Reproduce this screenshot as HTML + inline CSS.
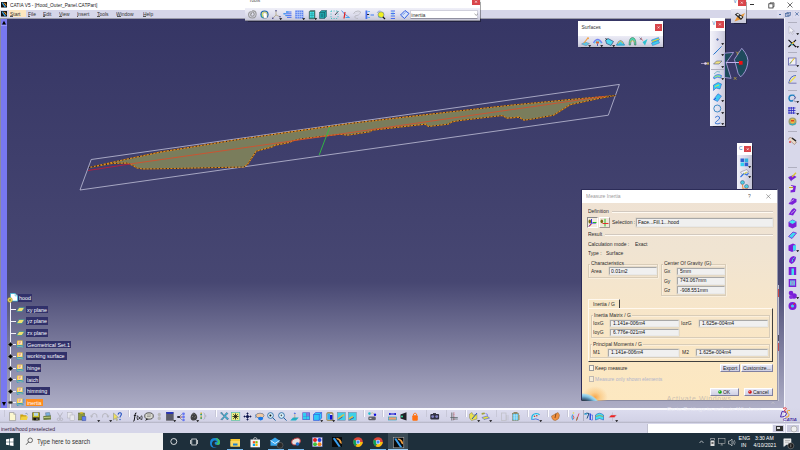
<!DOCTYPE html>
<html><head><meta charset="utf-8">
<style>
*{margin:0;padding:0;box-sizing:border-box}
html,body{width:800px;height:450px;overflow:hidden;background:#fff;font-family:"Liberation Sans",sans-serif;color:#222}
.a{position:absolute}
#title{left:0;top:0;width:800px;height:9.5px;background:#fff}
#menu{left:0;top:9.5px;width:800px;height:8.5px;background:#d6d6e9}
#sep{left:0;top:18px;width:800px;height:1px;background:#9a9aa8}
#vp{left:0;top:18.5px;width:784px;height:389px;background:linear-gradient(to bottom,#363665 0px,#474772 263px,#aeaec6 389px)}
#lstrip{left:0;top:18.6px;width:7px;height:389px;background:#7878f0;border-left:1px solid #8a8aa0}
#rstrip{left:784px;top:18px;width:16px;height:390px;background:#d8d8ea;border-left:1px solid #f4f4fb}
#btb{left:0;top:407.5px;width:800px;height:15.5px;background:linear-gradient(#fbfbff 0,#fbfbff 1.5px,#dcdcee 2px,#d2d2e6 13px,#a9a9b8 15.5px)}
#status{left:0;top:423px;width:800px;height:10px;background:#d6d6e9}
#task{left:0;top:433px;width:800px;height:17px;background:#1e2f3b}
.t{position:absolute;white-space:nowrap;line-height:1}
svg{position:absolute;left:0;top:0}
</style></head><body>
<div class="a" id="title"></div>
<div class="a" id="menu"></div>
<div class="a" id="sep"></div>
<div class="a" id="vp"></div>
<div class="a" id="lstrip"></div>
<div class="a" id="rstrip"></div>
<div class="a" id="btb"></div>
<div class="a" id="status"></div>
<div class="a" id="task"></div>

<!-- VIEWPORT GRAPHICS -->
<svg width="800" height="450" viewBox="0 0 800 450">
  <!-- plane -->
  <polygon points="80,190 91.2,159.5 619.4,84.4 608.3,115.2" fill="none" stroke="#c0c0d8" stroke-width="0.8"/>
  <!-- hood -->
  <path d="M89,167.5 L125,159.5 L160,152.1 L240,139.3 L300,130.6 L350,123.5 L400,117.6 L460,110.7 L510,105.2 L570,99.5 L615.5,95.5
   L600,98.3 L585,101.5 L570,104.7 L553.5,115.2 L534,118.7 L524,120.2 L519,117.2 L507,118.2 L502.5,115.5 L460,120.5 L451.7,122 L448,124.2 L428.5,126.5 L425.5,124.2 L372,130.2 L370,131.7 L347.5,135.2 L340,134.3 L300,139 L293,140.75 L289.5,142.5 L275.5,145.1 L272,146.9 L256.25,151.25 L247.5,164.4 L244,167 L160,168.75 L143,169 L137,168 L133,165.5 L127,163 L112,163.5 Z"
   fill="#7a7d5c" stroke="#e08a1a" stroke-width="1.15"/>
  <path d="M89,167.5 L125,159.5 L160,152.1 L240,139.3 L300,130.6 L350,123.5 L400,117.6 L460,110.7 L510,105.2 L570,99.5 L615.5,95.5
   L600,98.3 L585,101.5 L570,104.7 L553.5,115.2 L534,118.7 L524,120.2 L519,117.2 L507,118.2 L502.5,115.5 L460,120.5 L451.7,122 L448,124.2 L428.5,126.5 L425.5,124.2 L372,130.2 L370,131.7 L347.5,135.2 L340,134.3 L300,139 L293,140.75 L289.5,142.5 L275.5,145.1 L272,146.9 L256.25,151.25 L247.5,164.4 L244,167 L160,168.75 L143,169 L137,168 L133,165.5 L127,163 L112,163.5 Z"
   fill="none" stroke="#18141a" stroke-width="0.9" stroke-dasharray="1.2 2.2"/>
  <line x1="88" y1="170.5" x2="130" y2="164" stroke="#b01e40" stroke-width="1"/>
  <line x1="130" y1="164" x2="605" y2="96.3" stroke="#d2502e" stroke-width="0.9"/>
  <line x1="329.7" y1="127.2" x2="319.2" y2="155" stroke="#30c040" stroke-width="0.9"/>
</svg>

<!-- TREE START -->
<div class="a" style="left:10px;top:302px;width:0.9px;height:105.5px;background:#f0f0f8"></div>
<svg width="9" height="9" style="left:9.5px;top:293px" viewBox="0 0 9 9"><path d="M0.5,0.5 H5 L7.5,3 V8 H0.5Z" fill="#fff" stroke="#20c0e0" stroke-width="0.6"/><path d="M5,0.5 V3 H7.5" fill="#e0e0e0" stroke="#20c0e0" stroke-width="0.4"/></svg>
<svg width="6" height="6" style="left:7px;top:296.5px" viewBox="0 0 6 6"><circle cx="3" cy="3" r="2.4" fill="#e8d860" stroke="#a09030" stroke-width="0.5"/><circle cx="3" cy="3" r="0.8" fill="#404020"/></svg>
<div class="a" style="left:17.8px;top:294px;width:14.2px;height:8px;background:#31316a"></div>
<div class="t" style="left:18.8px;top:295.2px;font-size:6.1px;color:#f8f8ff;transform:scaleX(0.88);transform-origin:0 0">hood</div>
<div class="a" style="left:10.5px;top:309.1px;width:5px;height:0.9px;background:#f0f0f8"></div>
<svg width="10" height="6" style="left:15.5px;top:307.0px" viewBox="0 0 10 6"><path d="M0.5,4.5 L3,0.5 H8.5 L6,4.5Z" fill="#f0e070" stroke="#2080a0" stroke-width="0.6"/></svg>
<div class="a" style="left:26.4px;top:305.6px;width:21.300000000000004px;height:7.6px;background:#31316a"></div>
<div class="t" style="left:27.2px;top:306.65px;font-size:6.1px;color:#f8f8ff;transform:scaleX(0.88);transform-origin:0 0">xy plane</div>
<div class="a" style="left:10.5px;top:320.8px;width:5px;height:0.9px;background:#f0f0f8"></div>
<svg width="10" height="6" style="left:15.5px;top:318.7px" viewBox="0 0 10 6"><path d="M0.5,4.5 L3,0.5 H8.5 L6,4.5Z" fill="#f0e070" stroke="#2080a0" stroke-width="0.6"/></svg>
<div class="a" style="left:26.4px;top:317.3px;width:21.300000000000004px;height:7.6px;background:#31316a"></div>
<div class="t" style="left:27.2px;top:318.34999999999997px;font-size:6.1px;color:#f8f8ff;transform:scaleX(0.88);transform-origin:0 0">yz plane</div>
<div class="a" style="left:10.5px;top:332.6px;width:5px;height:0.9px;background:#f0f0f8"></div>
<svg width="10" height="6" style="left:15.5px;top:330.5px" viewBox="0 0 10 6"><path d="M0.5,4.5 L3,0.5 H8.5 L6,4.5Z" fill="#f0e070" stroke="#2080a0" stroke-width="0.6"/></svg>
<div class="a" style="left:26.4px;top:329.1px;width:21.300000000000004px;height:7.6px;background:#31316a"></div>
<div class="t" style="left:27.2px;top:330.15px;font-size:6.1px;color:#f8f8ff;transform:scaleX(0.88);transform-origin:0 0">zx plane</div>
<div class="a" style="left:10.5px;top:344.3px;width:5px;height:0.9px;background:#f0f0f8"></div>
<svg width="5" height="5" style="left:7.9px;top:342.2px" viewBox="0 0 5 5"><path d="M2.5,0 L5,2.5 L2.5,5 L0,2.5Z" fill="#000" stroke="#c8c8d8" stroke-width="0.4"/><path d="M1,2.5 H4 M2.5,1 V4" stroke="#000" stroke-width="1"/></svg>
<svg width="9" height="9" style="left:15.8px;top:340.2px" viewBox="0 0 9 9"><path d="M1,1.5 Q1,0.5 2,0.5 H6.5 V6 H1Z" fill="#f8d040"/><rect x="2.2" y="1.2" width="3.5" height="3.2" fill="#fff8e0"/><path d="M2.5,2 H5 M2.5,3.2 H4.5" stroke="#e04020" stroke-width="0.6"/><path d="M0.5,5.5 Q4,4.5 7.5,5.8 L7.2,7.5 Q4,6.5 1,8Z" fill="#2090c8"/><path d="M1,6.8 Q4,5.8 7,7" stroke="#f0e080" stroke-width="0.5" fill="none"/><path d="M7.8,0.8 V5" stroke="#3080c0" stroke-width="0.6"/></svg>
<div class="a" style="left:26.4px;top:340.8px;width:45.1px;height:7.6px;background:#31316a"></div>
<div class="t" style="left:27.2px;top:341.84999999999997px;font-size:6.1px;color:#f8f8ff;transform:scaleX(0.88);transform-origin:0 0">Geometrical Set.1</div>
<div class="a" style="left:10.5px;top:355.90000000000003px;width:5px;height:0.9px;background:#f0f0f8"></div>
<svg width="5" height="5" style="left:7.9px;top:353.8px" viewBox="0 0 5 5"><path d="M2.5,0 L5,2.5 L2.5,5 L0,2.5Z" fill="#000" stroke="#c8c8d8" stroke-width="0.4"/><path d="M1,2.5 H4 M2.5,1 V4" stroke="#000" stroke-width="1"/></svg>
<svg width="9" height="9" style="left:15.8px;top:351.8px" viewBox="0 0 9 9"><path d="M1,1.5 Q1,0.5 2,0.5 H6.5 V6 H1Z" fill="#f8d040"/><rect x="2.2" y="1.2" width="3.5" height="3.2" fill="#fff8e0"/><path d="M2.5,2 H5 M2.5,3.2 H4.5" stroke="#e04020" stroke-width="0.6"/><path d="M0.5,5.5 Q4,4.5 7.5,5.8 L7.2,7.5 Q4,6.5 1,8Z" fill="#2090c8"/><path d="M1,6.8 Q4,5.8 7,7" stroke="#f0e080" stroke-width="0.5" fill="none"/><path d="M7.8,0.8 V5" stroke="#3080c0" stroke-width="0.6"/></svg>
<div class="a" style="left:26.4px;top:352.40000000000003px;width:40.50000000000001px;height:7.6px;background:#31316a"></div>
<div class="t" style="left:27.2px;top:353.45px;font-size:6.1px;color:#f8f8ff;transform:scaleX(0.88);transform-origin:0 0">working surface</div>
<div class="a" style="left:10.5px;top:367.6px;width:5px;height:0.9px;background:#f0f0f8"></div>
<svg width="5" height="5" style="left:7.9px;top:365.5px" viewBox="0 0 5 5"><path d="M2.5,0 L5,2.5 L2.5,5 L0,2.5Z" fill="#000" stroke="#c8c8d8" stroke-width="0.4"/><path d="M1,2.5 H4 M2.5,1 V4" stroke="#000" stroke-width="1"/></svg>
<svg width="9" height="9" style="left:15.8px;top:363.5px" viewBox="0 0 9 9"><path d="M1,1.5 Q1,0.5 2,0.5 H6.5 V6 H1Z" fill="#f8d040"/><rect x="2.2" y="1.2" width="3.5" height="3.2" fill="#fff8e0"/><path d="M2.5,2 H5 M2.5,3.2 H4.5" stroke="#e04020" stroke-width="0.6"/><path d="M0.5,5.5 Q4,4.5 7.5,5.8 L7.2,7.5 Q4,6.5 1,8Z" fill="#2090c8"/><path d="M1,6.8 Q4,5.8 7,7" stroke="#f0e080" stroke-width="0.5" fill="none"/><path d="M7.8,0.8 V5" stroke="#3080c0" stroke-width="0.6"/></svg>
<div class="a" style="left:26.4px;top:364.1px;width:14.800000000000004px;height:7.6px;background:#31316a"></div>
<div class="t" style="left:27.2px;top:365.15px;font-size:6.1px;color:#f8f8ff;transform:scaleX(0.88);transform-origin:0 0">hinge</div>
<div class="a" style="left:10.5px;top:379.3px;width:5px;height:0.9px;background:#f0f0f8"></div>
<svg width="5" height="5" style="left:7.9px;top:377.2px" viewBox="0 0 5 5"><path d="M2.5,0 L5,2.5 L2.5,5 L0,2.5Z" fill="#000" stroke="#c8c8d8" stroke-width="0.4"/><path d="M1,2.5 H4 M2.5,1 V4" stroke="#000" stroke-width="1"/></svg>
<svg width="9" height="9" style="left:15.8px;top:375.2px" viewBox="0 0 9 9"><path d="M1,1.5 Q1,0.5 2,0.5 H6.5 V6 H1Z" fill="#f8d040"/><rect x="2.2" y="1.2" width="3.5" height="3.2" fill="#fff8e0"/><path d="M2.5,2 H5 M2.5,3.2 H4.5" stroke="#e04020" stroke-width="0.6"/><path d="M0.5,5.5 Q4,4.5 7.5,5.8 L7.2,7.5 Q4,6.5 1,8Z" fill="#2090c8"/><path d="M1,6.8 Q4,5.8 7,7" stroke="#f0e080" stroke-width="0.5" fill="none"/><path d="M7.8,0.8 V5" stroke="#3080c0" stroke-width="0.6"/></svg>
<div class="a" style="left:26.4px;top:375.8px;width:12.5px;height:7.6px;background:#31316a"></div>
<div class="t" style="left:27.2px;top:376.84999999999997px;font-size:6.1px;color:#f8f8ff;transform:scaleX(0.88);transform-origin:0 0">latch</div>
<div class="a" style="left:10.5px;top:390.90000000000003px;width:5px;height:0.9px;background:#f0f0f8"></div>
<svg width="5" height="5" style="left:7.9px;top:388.8px" viewBox="0 0 5 5"><path d="M2.5,0 L5,2.5 L2.5,5 L0,2.5Z" fill="#000" stroke="#c8c8d8" stroke-width="0.4"/><path d="M1,2.5 H4 M2.5,1 V4" stroke="#000" stroke-width="1"/></svg>
<svg width="9" height="9" style="left:15.8px;top:386.8px" viewBox="0 0 9 9"><path d="M1,1.5 Q1,0.5 2,0.5 H6.5 V6 H1Z" fill="#f8d040"/><rect x="2.2" y="1.2" width="3.5" height="3.2" fill="#fff8e0"/><path d="M2.5,2 H5 M2.5,3.2 H4.5" stroke="#e04020" stroke-width="0.6"/><path d="M0.5,5.5 Q4,4.5 7.5,5.8 L7.2,7.5 Q4,6.5 1,8Z" fill="#2090c8"/><path d="M1,6.8 Q4,5.8 7,7" stroke="#f0e080" stroke-width="0.5" fill="none"/><path d="M7.8,0.8 V5" stroke="#3080c0" stroke-width="0.6"/></svg>
<div class="a" style="left:26.4px;top:387.40000000000003px;width:23.4px;height:7.6px;background:#31316a"></div>
<div class="t" style="left:27.2px;top:388.45px;font-size:6.1px;color:#f8f8ff;transform:scaleX(0.88);transform-origin:0 0">himming</div>
<div class="a" style="left:10.5px;top:402.40000000000003px;width:5px;height:0.9px;background:#f0f0f8"></div>
<svg width="5" height="5" style="left:7.9px;top:400.3px" viewBox="0 0 5 5"><rect x="0.3" y="1.2" width="4.4" height="2.6" rx="1" fill="#222" stroke="#aaa" stroke-width="0.3"/></svg>
<svg width="9" height="9" style="left:15.8px;top:398.3px" viewBox="0 0 9 9"><path d="M1,1.5 Q1,0.5 2,0.5 H6.5 V6 H1Z" fill="#f8d040"/><rect x="2.2" y="1.2" width="3.5" height="3.2" fill="#fff8e0"/><path d="M2.5,2 H5 M2.5,3.2 H4.5" stroke="#e04020" stroke-width="0.6"/><path d="M0.5,5.5 Q4,4.5 7.5,5.8 L7.2,7.5 Q4,6.5 1,8Z" fill="#2090c8"/><path d="M1,6.8 Q4,5.8 7,7" stroke="#f0e080" stroke-width="0.5" fill="none"/><path d="M7.8,0.8 V5" stroke="#3080c0" stroke-width="0.6"/></svg>
<div class="a" style="left:26.4px;top:398.90000000000003px;width:16.4px;height:7.6px;background:#ff8a1a"></div>
<div class="t" style="left:27.2px;top:399.95px;font-size:6.1px;color:#f8f8ff;transform:scaleX(0.88);transform-origin:0 0">inertia</div>
<!-- TREE END -->
<!-- TITLE BAR -->
<svg width="6" height="6" style="left:1px;top:2px" viewBox="0 0 6 6"><rect width="6" height="5.5" fill="#111"/><path d="M0.5,0.8 L3.5,5.3 L5.2,5.3 L1.8,0.5Z" fill="#3aa0e0"/><path d="M2.6,0.5 Q5.5,1 5.5,4 L4.5,3.5 Q4,1.5 2.6,1.2Z" fill="#f0a030"/></svg>
<div class="t" style="left:9.6px;top:3px;font-size:5.5px;color:#222;transform:scaleX(0.865);transform-origin:0 0">CATIA V5 - [Hood_Outer_Panel.CATPart]</div>
<div class="a" style="left:749.6px;top:4.2px;width:4.5px;height:0.6px;background:#333"></div>
<svg width="8" height="8" style="left:767.5px;top:2px" viewBox="0 0 8 8"><rect x="0.8" y="1.8" width="4.2" height="4.2" fill="none" stroke="#333" stroke-width="0.8"/><path d="M2,1.8 V0.8 H6 V4.8 H5" fill="none" stroke="#333" stroke-width="0.7"/></svg>
<svg width="8" height="8" style="left:786.5px;top:1.8px" viewBox="0 0 8 8"><path d="M0.5,0.5 L5.5,5.5 M5.5,0.5 L0.5,5.5" stroke="#333" stroke-width="0.7"/></svg>

<!-- MENU BAR -->
<svg width="6" height="6" style="left:1px;top:10.8px" viewBox="0 0 6 6"><rect width="6" height="5.5" fill="#111"/><path d="M0.5,0.8 L3.5,5.3 L5.2,5.3 L1.8,0.5Z" fill="#3aa0e0"/><path d="M2.6,0.5 Q5.5,1 5.5,4 L4.5,3.5 Q4,1.5 2.6,1.2Z" fill="#f0a030"/></svg>
<div class="a" style="left:8.75px;top:9.6px;width:17.5px;height:7.8px;background:#fde6bf"></div>
<div class="t" style="left:10px;top:11.7px;font-size:5.2px;color:#333;transform:scaleX(0.95);transform-origin:0 0">Start</div><div class="a" style="left:10px;top:16.2px;width:3px;height:0.5px;background:#555"></div>
<div class="a" style="left:27.7px;top:16.2px;width:2.6px;height:0.5px;background:#555"></div>
<div class="a" style="left:42.7px;top:16.2px;width:2.6px;height:0.5px;background:#555"></div>
<div class="a" style="left:58.9px;top:16.2px;width:3.2px;height:0.5px;background:#555"></div>
<div class="a" style="left:77.2px;top:16.2px;width:1px;height:0.5px;background:#555"></div>
<div class="a" style="left:97px;top:16.2px;width:2.8px;height:0.5px;background:#555"></div>
<div class="a" style="left:116.5px;top:16.2px;width:4.5px;height:0.5px;background:#555"></div>
<div class="a" style="left:142.7px;top:16.2px;width:3.2px;height:0.5px;background:#555"></div>

<div class="t" style="left:27.5px;top:11.7px;font-size:5.2px;color:#333;transform:scaleX(0.95);transform-origin:0 0">File</div>
<div class="t" style="left:42.5px;top:11.7px;font-size:5.2px;color:#333;transform:scaleX(0.95);transform-origin:0 0">Edit</div>
<div class="t" style="left:58.7px;top:11.7px;font-size:5.2px;color:#333;transform:scaleX(0.95);transform-origin:0 0">View</div>
<div class="t" style="left:77px;top:11.7px;font-size:5.2px;color:#333;transform:scaleX(0.95);transform-origin:0 0">Insert</div>
<div class="t" style="left:97px;top:11.7px;font-size:5.2px;color:#333;transform:scaleX(0.95);transform-origin:0 0">Tools</div>
<div class="t" style="left:116.3px;top:11.7px;font-size:5.2px;color:#333;transform:scaleX(0.95);transform-origin:0 0">Window</div>
<div class="t" style="left:142.5px;top:11.7px;font-size:5.2px;color:#333;transform:scaleX(0.95);transform-origin:0 0">Help</div>
<div class="a" style="left:777px;top:10.5px;width:6px;height:7px;background:#dcdcee"></div>
<div class="a" style="left:784.5px;top:10.5px;width:7px;height:7px;background:#dcdcee"></div>
<div class="a" style="left:792.5px;top:10.5px;width:7.5px;height:7px;background:#dcdcee"></div>
<div class="a" style="left:778.5px;top:14.3px;width:2.5px;height:0.7px;background:#4a6aa0"></div>
<svg width="8" height="8" style="left:785px;top:11.6px" viewBox="0 0 8 8"><rect x="0.5" y="1.5" width="3.5" height="3" fill="none" stroke="#4a6aa0" stroke-width="0.7"/><rect x="2" y="0.3" width="3.5" height="3" fill="none" stroke="#4a6aa0" stroke-width="0.7"/></svg>
<svg width="8" height="8" style="left:795px;top:12.3px" viewBox="0 0 8 8"><path d="M0.3,0.3 L3.5,3.5 M3.5,0.3 L0.3,3.5" stroke="#4a6aa0" stroke-width="0.8"/></svg>

<!-- left strip arrows -->
<svg width="7" height="8" style="left:1px;top:19.5px" viewBox="0 0 7 8"><path d="M1,4.6 L3,0.8 L5,4.6Z" fill="#000"/></svg><div class="a" style="left:1px;top:25px;width:6px;height:0.6px;background:#9a9af8"></div>
<svg width="7" height="8" style="left:1px;top:401px" viewBox="0 0 7 8"><path d="M1,1 L3,5 L5,1Z" fill="#000"/></svg>

<!-- BTB START -->
<div class="a" style="left:3.6px;top:410px;width:1.8px;height:7px;background:#fcfcff;border-left:0.5px solid #c8c8d8"></div>
<svg width="10" height="10" style="left:9.2px;top:411.8px" viewBox="0 0 10 10"><path d="M0.5,0.5 H4.8 L6.6,2.3 V8.6 H0.5Z" fill="#fbf8cf" stroke="#8a8a90" stroke-width="0.6"/><path d="M4.8,0.5 V2.3 H6.6" fill="#ddd" stroke="#8a8a90" stroke-width="0.5"/></svg>
<svg width="10" height="10" style="left:20px;top:411.8px" viewBox="0 0 10 10"><path d="M0.3,2.5 H3 L3.6,3.2 H6.5 V8 H0.3Z" fill="#c8a010"/><path d="M1.5,4.5 H8 L6.8,8 H0.3Z" fill="#f0d040"/><path d="M5.5,1.5 Q7,0.5 7.5,2.5" stroke="#5080a0" stroke-width="0.6" fill="none"/></svg>
<svg width="10" height="10" style="left:31.8px;top:411.8px" viewBox="0 0 10 10"><rect x="0.3" y="0.4" width="7.4" height="8" fill="#3a3a10"/><rect x="0.8" y="0.8" width="6.4" height="4.5" fill="#c8c030"/><rect x="2" y="0.8" width="4" height="3" fill="#b8d8e8"/><rect x="2" y="6" width="4" height="2.2" fill="#111"/><rect x="4.5" y="6.4" width="1" height="1.4" fill="#ddd"/></svg>
<svg width="10" height="10" style="left:43px;top:411.8px" viewBox="0 0 10 10"><path d="M2.5,0.8 L6.5,0.5 L7.5,4 L3,4.3Z" fill="#7ab0e0" stroke="#506070" stroke-width="0.4"/><path d="M0.3,4 L7.8,3.5 L8,7.5 L0.5,8Z" fill="#6c7c40"/><path d="M0.8,5.5 L7.5,5.2" stroke="#c0d080" stroke-width="1"/></svg>
<svg width="10" height="10" style="left:55.5px;top:411.8px" viewBox="0 0 10 10"><path d="M1.5,0.5 L4.5,5.5 M6.5,0.5 L3.5,5.5" stroke="#a8a8b0" stroke-width="0.7" fill="none"/><circle cx="2.6" cy="7.3" r="1.3" fill="none" stroke="#a8a8b0" stroke-width="0.6"/><circle cx="5.4" cy="7.3" r="1.3" fill="none" stroke="#a8a8b0" stroke-width="0.6"/></svg>
<svg width="10" height="10" style="left:66.6px;top:411.8px" viewBox="0 0 10 10"><rect x="0.5" y="0.5" width="4.5" height="5.5" fill="#e8e8ee" stroke="#b0b0b8" stroke-width="0.5"/><rect x="3" y="3" width="4.5" height="5.5" fill="#e8e8ee" stroke="#b0b0b8" stroke-width="0.5"/></svg>
<svg width="10" height="10" style="left:78px;top:411.8px" viewBox="0 0 10 10"><rect x="0.5" y="1" width="6" height="7" fill="#8a9840" stroke="#505820" stroke-width="0.5"/><rect x="2.2" y="0.2" width="2.6" height="1.5" fill="#e0c020"/><path d="M4,4.5 H7.8 V8.6 H4Z" fill="#6080f0" stroke="#304090" stroke-width="0.4"/></svg>
<svg width="10" height="10" style="left:89.8px;top:411.8px" viewBox="0 0 10 10"><path d="M1.5,5 Q1.5,1.5 4.5,1.5 Q7.5,1.5 7,5.5" stroke="#b8b8c0" stroke-width="1" fill="none"/><path d="M0,3.5 L1.5,6 L3.2,3.8Z" fill="#b8b8c0"/></svg>
<svg width="4" height="3" style="left:97.3px;top:419.5px" viewBox="0 0 4 3"><path d="M0.2,0.3 H3.2 L1.7,2Z" fill="#000"/></svg>
<svg width="10" height="10" style="left:101.2px;top:411.8px" viewBox="0 0 10 10"><path d="M7,5 Q7,1.5 4,1.5 Q1,1.5 1.5,5.5" stroke="#b8b8c0" stroke-width="1" fill="none"/><path d="M8.5,3.5 L7,6 L5.3,3.8Z" fill="#b8b8c0"/></svg>
<svg width="4" height="3" style="left:108.8px;top:419.5px" viewBox="0 0 4 3"><path d="M0.2,0.3 H3.2 L1.7,2Z" fill="#000"/></svg>
<svg width="10" height="10" style="left:113px;top:411.8px" viewBox="0 0 10 10"><path d="M0.5,1 L0.5,8 L2.3,6.3 L3.6,8.6 L4.6,8.2 L3.4,5.8 L5.5,5.6Z" fill="#f0e060" stroke="#607080" stroke-width="0.4"/><path d="M5,2.5 Q5.5,0.5 7.3,0.8 Q9,1.3 8,3.3 Q7,4.3 7,5.5" stroke="#2050c0" stroke-width="1.1" fill="none"/><circle cx="7" cy="7.5" r="0.7" fill="#2050c0"/></svg>
<div class="a" style="left:128px;top:410px;width:1.8px;height:7px;background:#fcfcff;border-left:0.5px solid #c8c8d8"></div>
<svg width="10" height="10" style="left:132.5px;top:411.5px" viewBox="0 0 10 10"><path d="M3.5,1 Q2.5,0.5 2.2,2 L1.2,8.5 Q0.8,9.5 0.2,9" stroke="#000" stroke-width="0.9" fill="none"/><path d="M0.8,3.5 H3.3" stroke="#000" stroke-width="0.7"/><path d="M4.6,3.5 Q3.6,5.5 4.6,8 M8.6,3.5 Q9.6,5.5 8.6,8" stroke="#000" stroke-width="0.7" fill="none"/><path d="M5.4,4.5 L7.8,7.5 M7.8,4.5 L5.4,7.5" stroke="#000" stroke-width="0.8"/></svg>
<svg width="10" height="10" style="left:144px;top:411.8px" viewBox="0 0 10 10"><ellipse cx="5" cy="4" rx="4.3" ry="3.2" fill="#d8d8d0" stroke="#222" stroke-width="0.7"/><path d="M2.5,6.5 L1,9 L4.5,7" fill="#222"/><path d="M3,3 H7 M3,4.5 H6.5" stroke="#666" stroke-width="0.5"/></svg>
<svg width="10" height="10" style="left:157px;top:411.8px" viewBox="0 0 10 10"><ellipse cx="2.3" cy="2.5" rx="1.6" ry="1.8" fill="#b8b8b8"/><ellipse cx="2.3" cy="6.3" rx="1.6" ry="2" fill="#b8b8b8"/></svg>
<svg width="10" height="10" style="left:165.6px;top:411.8px" viewBox="0 0 10 10"><rect x="0.3" y="0.3" width="7" height="8" fill="#5a5a68" stroke="#444" stroke-width="0.4"/><rect x="0.3" y="0.3" width="7" height="1.3" fill="#1020e0"/></svg>
<svg width="4" height="3" style="left:172.5px;top:419.5px" viewBox="0 0 4 3"><path d="M0.2,0.3 H3.2 L1.7,2Z" fill="#000"/></svg>
<svg width="10" height="10" style="left:177px;top:411.8px" viewBox="0 0 10 10"><path d="M2,5 L5,2 M2,5 L5,5 M2,5 L5,8" stroke="#506070" stroke-width="0.5"/><circle cx="6.5" cy="1.8" r="1.4" fill="#6878f0"/><circle cx="6.5" cy="5" r="1.4" fill="#6878f0"/><circle cx="6.5" cy="8" r="1.3" fill="#6878f0"/><rect x="0.3" y="4" width="2.6" height="2" fill="#303040"/><circle cx="4" cy="5" r="0.6" fill="#e03020"/></svg>
<svg width="10" height="10" style="left:189.5px;top:411.8px" viewBox="0 0 10 10"><path d="M3.8,0.5 Q7.5,2 7.2,6 Q6.5,8.6 3.8,8.6 Q1,8.6 0.6,6 Q0.5,2 3.8,0.5Z" fill="#404040"/><path d="M2.5,2 Q3.5,1.5 4.5,2.5 M1.8,5 L3,4 M4.5,5.5 L5.8,4.5" stroke="#bbb" stroke-width="0.5"/></svg>
<svg width="4" height="3" style="left:196.3px;top:419.5px" viewBox="0 0 4 3"><path d="M0.2,0.3 H3.2 L1.7,2Z" fill="#000"/></svg>
<svg width="10" height="10" style="left:200px;top:411.8px" viewBox="0 0 10 10"><rect x="0.4" y="0.6" width="1.6" height="2.8" fill="#c8b030"/><rect x="0.4" y="2" width="1.6" height="1.2" fill="#20a090"/><rect x="0.4" y="4.3" width="1.6" height="2.8" fill="#c8b030"/><rect x="0.4" y="5.5" width="1.6" height="1.2" fill="#20a090"/><path d="M3.5,0.8 Q5,1 5,4 Q5,7.5 3.5,7.5 M5,4 H6.5" stroke="#909098" stroke-width="0.5" fill="none"/></svg>
<div class="a" style="left:215px;top:410px;width:1.8px;height:7px;background:#fcfcff;border-left:0.5px solid #c8c8d8"></div>
<svg width="10" height="10" style="left:220px;top:411.8px" viewBox="0 0 10 10"><path d="M0.5,1 L4,4.2 L0.8,7.5 L2.5,7.8 L4.5,5 L7.5,8 L8.5,6.5 L5.5,4 L8,1.5 L6.5,0.5 L4,3.5 L1.8,0.3Z" fill="#40b8d8" stroke="#304060" stroke-width="0.4"/></svg>
<svg width="10" height="10" style="left:231px;top:411.8px" viewBox="0 0 10 10"><rect x="0.2" y="0.4" width="8.6" height="8.2" fill="#eeee80" stroke="#40b8b8" stroke-width="0.6"/><path d="M4.5,1.5 V7.5 M1.5,4.5 H7.5 M2.3,2.3 L6.7,6.7 M6.7,2.3 L2.3,6.7" stroke="#111" stroke-width="0.8"/></svg>
<svg width="10" height="10" style="left:243px;top:411.8px" viewBox="0 0 10 10"><path d="M4.5,0.3 L5.8,2 H3.2Z M4.5,8.7 L5.8,7 H3.2Z M0.3,4.5 L2,3.2 V5.8Z M8.7,4.5 L7,3.2 V5.8Z" fill="#101850"/><circle cx="4.5" cy="4.5" r="1.6" fill="#101850"/><path d="M4.5,2 V7 M2,4.5 H7" stroke="#101850" stroke-width="0.7"/></svg>
<svg width="10" height="10" style="left:254.6px;top:411.8px" viewBox="0 0 10 10"><ellipse cx="5" cy="3.6" rx="4" ry="2.4" fill="#f0c8a0" stroke="#405070" stroke-width="0.5"/><path d="M0.5,2.5 Q-0.2,4.5 1,6" stroke="#4080c0" stroke-width="0.7" fill="none"/><ellipse cx="5.6" cy="6.6" rx="2.6" ry="1.8" fill="#1878e8"/></svg>
<svg width="10" height="10" style="left:266.5px;top:411.8px" viewBox="0 0 10 10"><circle cx="3.5" cy="3.5" r="2.9" fill="#d8f0f8" stroke="#2060a0" stroke-width="0.8"/><circle cx="3.4" cy="3.4" r="1" fill="#111"/><path d="M5.6,5.6 L8.5,8.6" stroke="#2060a0" stroke-width="1"/></svg>
<svg width="10" height="10" style="left:278.2px;top:411.8px" viewBox="0 0 10 10"><circle cx="3.5" cy="3.5" r="2.9" fill="#d8f0f8" stroke="#2060a0" stroke-width="0.8"/><circle cx="3.4" cy="3.4" r="0.8" fill="#555"/><path d="M5.6,5.6 L8.5,8.6" stroke="#2060a0" stroke-width="1"/></svg>
<svg width="10" height="10" style="left:290px;top:411.8px" viewBox="0 0 10 10"><path d="M0.3,8.5 L3,5.5 H8.7 L6,8.5Z" fill="#20b0c8"/><path d="M4.8,6.5 V1" stroke="#a08040" stroke-width="0.5"/><path d="M3.6,2 L4.8,0.3 L6,2Z" fill="#5070f0"/></svg>
<svg width="10" height="10" style="left:301.8px;top:411.8px" viewBox="0 0 10 10"><rect x="0.4" y="0.4" width="7.5" height="7.5" fill="#5050c8"/><rect x="1" y="1" width="3" height="3" fill="#30d0f0"/><rect x="4.3" y="1" width="3" height="3" fill="#8080e0"/><rect x="1" y="4.3" width="3" height="3" fill="#30d0f0"/><rect x="4.3" y="4.3" width="3" height="3" fill="#30d0f0"/></svg>
<svg width="10" height="10" style="left:313px;top:411.8px" viewBox="0 0 10 10"><path d="M0.5,2.5 L2.8,0.4 H8.6 V6 L6.3,8.4 H0.5Z" fill="#30c8f8" stroke="#3040d8" stroke-width="0.6"/><path d="M0.5,2.5 H6.3 V8.4 M6.3,2.5 L8.6,0.4" stroke="#3040d8" stroke-width="0.5" fill="none"/></svg>
<svg width="4" height="3" style="left:320.3px;top:419.5px" viewBox="0 0 4 3"><path d="M0.2,0.3 H3.2 L1.7,2Z" fill="#000"/></svg>
<svg width="10" height="10" style="left:325.5px;top:411.8px" viewBox="0 0 10 10"><rect x="0.4" y="0.3" width="7" height="8.4" rx="1.5" fill="#908040"/><rect x="1.4" y="1.6" width="5" height="6" fill="#e0e0f0"/><rect x="1.4" y="1.6" width="2.6" height="6" fill="#30b0f0"/><rect x="4" y="3" width="2.4" height="4.6" fill="#1010d0"/></svg>
<svg width="4" height="3" style="left:332.3px;top:419.5px" viewBox="0 0 4 3"><path d="M0.2,0.3 H3.2 L1.7,2Z" fill="#000"/></svg>
<svg width="10" height="10" style="left:337px;top:411.8px" viewBox="0 0 10 10"><rect x="0.3" y="0.3" width="8" height="8" fill="#40d0e8" stroke="#8080a0" stroke-width="0.5"/><path d="M1,7 L7,2.5" stroke="#e0c040" stroke-width="1.5"/><path d="M1.5,7.5 L5.5,5" stroke="#3040a0" stroke-width="0.8"/></svg>
<svg width="10" height="10" style="left:348.4px;top:411.8px" viewBox="0 0 10 10"><rect x="0.3" y="0.3" width="8" height="8" fill="#40d0e8" stroke="#8080a0" stroke-width="0.5"/><path d="M1,7 L5,4.5" stroke="#e0c040" stroke-width="1.5"/><path d="M1.5,7.8 L6,5.5" stroke="#3040a0" stroke-width="0.8"/></svg>
<div class="a" style="left:363px;top:410px;width:1.8px;height:7px;background:#fcfcff;border-left:0.5px solid #c8c8d8"></div>
<svg width="10" height="10" style="left:368px;top:411.8px" viewBox="0 0 10 10"><circle cx="1.5" cy="1.6" r="1.3" fill="#20c0d0"/><path d="M2.5,1.5 Q4.5,-0.5 6.8,2.5" stroke="#c0c080" stroke-width="0.7" fill="none"/><circle cx="7" cy="2.8" r="1.2" fill="#1010e0"/><rect x="0.3" y="4.5" width="7.5" height="3.8" rx="1.4" fill="#606068"/><rect x="1.5" y="5.8" width="2" height="1.2" fill="#ccc"/></svg>
<div class="a" style="left:382.3px;top:410px;width:1.8px;height:7px;background:#fcfcff;border-left:0.5px solid #c8c8d8"></div>
<svg width="10" height="10" style="left:387.5px;top:411.8px" viewBox="0 0 10 10"><rect x="0.5" y="5" width="8" height="3" fill="#f0a070" stroke="#20a0c0" stroke-width="0.6"/><path d="M1,2 H8" stroke="#1010d0" stroke-width="1.8"/><path d="M2.5,2 H6.5" stroke="#e0e0f0" stroke-width="0.8"/></svg>
<svg width="10" height="10" style="left:400px;top:411.8px" viewBox="0 0 10 10"><path d="M0.5,2.5 L6.5,0.3 V8.6 L0.5,6.5Z" fill="#202028"/><circle cx="2" cy="4.5" r="1" fill="#30e0a0"/></svg>
<svg width="10" height="10" style="left:412.4px;top:411.8px" viewBox="0 0 10 10"><rect x="0.3" y="3.2" width="5.5" height="5.6" rx="1" fill="#ff7010"/><path d="M1.5,3.5 V2 Q3,0 4.6,2 V3.5" stroke="#ff7010" stroke-width="0.9" fill="none"/></svg>
<div class="a" style="left:425.7px;top:410px;width:1.8px;height:7px;background:#fcfcff;border-left:0.5px solid #c8c8d8"></div>
<svg width="10" height="10" style="left:430px;top:411.8px" viewBox="0 0 10 10"><rect x="0.3" y="2" width="8.8" height="5.4" rx="1" fill="#303040"/><circle cx="2.7" cy="4.6" r="1.4" fill="#8080c0"/><circle cx="6.7" cy="4.6" r="1.4" fill="#8080c0"/><rect x="3" y="1" width="3" height="1.2" fill="#404050"/></svg>
<div class="a" style="left:445.6px;top:410px;width:1.8px;height:7px;background:#fcfcff;border-left:0.5px solid #c8c8d8"></div>
<svg width="10" height="10" style="left:450px;top:411.8px" viewBox="0 0 10 10"><path d="M1.5,0.5 V8.5 M3,0.5 V8.5" stroke="#606060" stroke-width="0.6"/><path d="M4,0.5 V8.5" stroke="#d03040" stroke-width="0.6" stroke-dasharray="1 0.6"/><path d="M0.3,5.5 H7.8 M3,7 H7.8" stroke="#506060" stroke-width="0.7"/></svg>
<div class="a" style="left:465px;top:410px;width:1.8px;height:7px;background:#fcfcff;border-left:0.5px solid #c8c8d8"></div>
<svg width="10" height="10" style="left:469.2px;top:411.8px" viewBox="0 0 10 10"><path d="M0.5,2 L3,0.5 L4,3 L8,2.5 L8,7 L2.5,8.5 L0.5,6Z" fill="#e8e050" stroke="#707050" stroke-width="0.4"/><path d="M3,7 L8,1" stroke="#1040d0" stroke-width="0.9"/></svg>
<svg width="4" height="3" style="left:476.6px;top:419.5px" viewBox="0 0 4 3"><path d="M0.2,0.3 H3.2 L1.7,2Z" fill="#000"/></svg>
<svg width="10" height="10" style="left:481px;top:411.8px" viewBox="0 0 10 10"><path d="M0.5,1 L3.5,0.4 L4,2 L0.8,2.8Z" fill="#a0a040"/><path d="M1,5.5 L6,4 L8.5,6 L3,7.5Z" fill="#e0e040" stroke="#3040e0" stroke-width="0.5"/><path d="M4.5,1.5 Q7,1.5 6.5,4" stroke="#5060f0" stroke-width="0.6" fill="none"/></svg>
<svg width="4" height="3" style="left:489.3px;top:419.5px" viewBox="0 0 4 3"><path d="M0.2,0.3 H3.2 L1.7,2Z" fill="#000"/></svg>
<div class="a" style="left:495.5px;top:410px;width:1.8px;height:7px;background:#fcfcff;border-left:0.5px solid #c8c8d8"></div>
<svg width="10" height="10" style="left:501px;top:411.8px" viewBox="0 0 10 10"><rect x="0.5" y="1" width="4.5" height="7.5" fill="none" stroke="#c0c0c8" stroke-width="0.8"/><path d="M5.5,3 V8.5 M7,3 V8.5" stroke="#c0c0c8" stroke-width="0.7"/></svg>
<svg width="10" height="10" style="left:512px;top:411.8px" viewBox="0 0 10 10"><rect x="0.5" y="1.5" width="6" height="7" fill="#60c8f0" stroke="#807040" stroke-width="0.5"/><path d="M2.5,1.5 V8.5 M4.5,1.5 V8.5 M0.5,3.8 H6.5 M0.5,6 H6.5" stroke="#d8f0f8" stroke-width="0.4"/><rect x="1.5" y="0.2" width="4" height="1.3" fill="#807040"/><path d="M7,3 V8" stroke="#a09050" stroke-width="1"/></svg>
<div class="a" style="left:527px;top:410px;width:1.8px;height:7px;background:#fcfcff;border-left:0.5px solid #c8c8d8"></div>
<svg width="10" height="10" style="left:531px;top:411.8px" viewBox="0 0 10 10"><path d="M1,8 Q0,2 5,1.5 Q8,1.5 8.5,3" stroke="#20b0e0" stroke-width="1.2" fill="#b8f0f8"/><path d="M1.5,7.5 Q5,6 8,8" stroke="#3060e0" stroke-width="0.8" fill="none"/><circle cx="3.5" cy="4.3" r="0.8" fill="#e02020"/><circle cx="5.8" cy="3.8" r="0.8" fill="#e02020"/></svg>
<svg width="4" height="3" style="left:538.7px;top:419.5px" viewBox="0 0 4 3"><path d="M0.2,0.3 H3.2 L1.7,2Z" fill="#000"/></svg>
<div class="a" style="left:547px;top:410px;width:1.8px;height:7px;background:#fcfcff;border-left:0.5px solid #c8c8d8"></div>
<svg width="10" height="10" style="left:551px;top:411.8px" viewBox="0 0 10 10"><path d="M0.5,4 L7,0.5 L8.5,3 Q8.5,7.5 4.5,8.5 Q1,8.5 0.5,4Z" fill="#f09040" stroke="#805020" stroke-width="0.4"/><path d="M5,1.5 L4,6" stroke="#603010" stroke-width="0.7"/></svg>
<div class="a" style="left:567px;top:410px;width:1.8px;height:7px;background:#fcfcff;border-left:0.5px solid #c8c8d8"></div>
<svg width="10" height="10" style="left:570.5px;top:411.8px" viewBox="0 0 10 10"><circle cx="2.5" cy="1" r="0.8" fill="#e0e040"/><path d="M2,2.5 Q0,5 2,8" stroke="#40a8e0" stroke-width="1.2" fill="none"/><path d="M2,3.5 Q3.5,5 2.5,7" stroke="#e04040" stroke-width="0.8" fill="none"/><path d="M8,1.5 L5.5,8.5" stroke="#e04060" stroke-width="0.9"/><path d="M6.5,5 L5.5,8.5" stroke="#708030" stroke-width="0.8"/></svg>
<div class="a" style="left:582.5px;top:410px;width:0.8px;height:11px;background:#b0b0c0"></div>
<svg width="10" height="10" style="left:583.5px;top:411.8px" viewBox="0 0 10 10"><path d="M0.5,2 Q3,0.5 5,1.5 L3,6.5" stroke="#205080" stroke-width="1" fill="none"/><path d="M0.5,2 L3,2" stroke="#30b0e0" stroke-width="1.2"/><rect x="5.5" y="1.5" width="1.5" height="6.5" fill="#3050e0"/><path d="M7,3 H8.5 V8 H7" stroke="#3050e0" stroke-width="0.6" fill="none"/></svg>
<svg width="10" height="10" style="left:595px;top:411.8px" viewBox="0 0 10 10"><path d="M0.5,3 Q4.5,-0.5 8.5,3 V8 Q4.5,5 0.5,8Z" fill="#40e0f0" stroke="#2060c0" stroke-width="0.6"/><path d="M0.8,4.5 Q4.5,2.5 8.3,4.5" stroke="#c09030" stroke-width="0.8" fill="none"/></svg>
<svg width="10" height="10" style="left:607.5px;top:411.8px" viewBox="0 0 10 10"><path d="M4.5,0.5 V9" stroke="#b0b0b8" stroke-width="0.5"/><path d="M0.8,5.5 L3,3 H8.5 L6.3,5.5Z" fill="#f02020" stroke="#c0c0d0" stroke-width="0.5"/></svg>
<svg width="4" height="3" style="left:614.5px;top:419.5px" viewBox="0 0 4 3"><path d="M0.2,0.3 H3.2 L1.7,2Z" fill="#000"/></svg>
<!-- BTB END -->
<!-- RS START -->
<div class="a" style="left:787.5px;top:21.5px;width:9px;height:1.2px;background:#f8f8ff;border-bottom:0.6px solid #b0b0c0"></div>
<svg width="10" height="10" style="left:788.2px;top:26px" viewBox="0 0 10 10"><path d="M1,0.5 L1,7.5 L2.8,5.8 L4.2,8.3 L5.3,7.8 L4,5.3 L6.5,5.2Z" fill="#f4f4fa" stroke="#a0a0b0" stroke-width="0.5"/></svg>
<svg width="4" height="3" style="left:796px;top:33px" viewBox="0 0 4 3"><path d="M0.2,0.3 H3.2 L1.7,2Z" fill="#000"/></svg>
<svg width="10" height="10" style="left:788.2px;top:38.5px" viewBox="0 0 10 10"><path d="M0.5,0.8 L8,8 M8,0.8 L0.5,8" stroke="#101018" stroke-width="1.1"/><path d="M3,6 L6,3" stroke="#e0c030" stroke-width="1.3"/><path d="M2.5,5 L5,6" stroke="#20a0c0" stroke-width="1"/></svg>
<svg width="4" height="3" style="left:796px;top:45.5px" viewBox="0 0 4 3"><path d="M0.2,0.3 H3.2 L1.7,2Z" fill="#000"/></svg>
<div class="a" style="left:787.5px;top:51.6px;width:9px;height:1.2px;background:#f8f8ff;border-bottom:0.6px solid #b0b0c0"></div>
<svg width="10" height="10" style="left:788.2px;top:57px" viewBox="0 0 10 10"><rect x="0.5" y="1" width="7.5" height="7" fill="#f0f0f8" stroke="#5050a0" stroke-width="0.7"/><path d="M2,6.5 L6.5,1" stroke="#e0c030" stroke-width="1.1"/><path d="M1.5,7 L3.5,4.5" stroke="#3080d0" stroke-width="0.7"/></svg>
<svg width="4" height="3" style="left:796px;top:64.5px" viewBox="0 0 4 3"><path d="M0.2,0.3 H3.2 L1.7,2Z" fill="#000"/></svg>
<div class="a" style="left:787.5px;top:70.5px;width:9px;height:1.2px;background:#f8f8ff;border-bottom:0.6px solid #b0b0c0"></div>
<svg width="10" height="10" style="left:788.2px;top:75px" viewBox="0 0 10 10"><path d="M0.8,8 Q2,0.5 8,0.5" stroke="#3050b0" stroke-width="0.8" fill="none"/><path d="M1.5,7.5 L7.5,1.5" stroke="#f0e040" stroke-width="1.3"/><path d="M0.5,8.2 H8.5" stroke="#5050a0" stroke-width="0.7"/></svg>
<div class="a" style="left:787.5px;top:89.5px;width:9px;height:1.2px;background:#f8f8ff;border-bottom:0.6px solid #b0b0c0"></div>
<svg width="10" height="10" style="left:788.2px;top:94px" viewBox="0 0 10 10"><path d="M6.5,1.5 Q1,0 1,4.5 Q1.5,8 5,6.5" stroke="#1a80c0" stroke-width="1.5" fill="none"/><path d="M6.5,2 Q8.5,4 6,5.5" stroke="#203080" stroke-width="0.9" fill="none"/><path d="M5.5,6.5 L8,8" stroke="#606070" stroke-width="0.6"/></svg>
<svg width="4" height="3" style="left:796px;top:101px" viewBox="0 0 4 3"><path d="M0.2,0.3 H3.2 L1.7,2Z" fill="#000"/></svg>
<svg width="10" height="10" style="left:788.2px;top:106px" viewBox="0 0 10 10"><path d="M1,1 V8 M3.3,1 V8 M5.6,1 V8 M0.3,2 H7.5 M0.3,4.5 H7.5 M0.3,7 H7.5" stroke="#2020c0" stroke-width="0.8"/></svg>
<svg width="4" height="3" style="left:796px;top:113px" viewBox="0 0 4 3"><path d="M0.2,0.3 H3.2 L1.7,2Z" fill="#000"/></svg>
<svg width="10" height="10" style="left:788.2px;top:117.3px" viewBox="0 0 10 10"><circle cx="4.5" cy="4.5" r="4" fill="#a0a070"/><circle cx="4.5" cy="4" r="2.2" fill="#f0c040"/><path d="M1.5,7 Q4.5,9 8,6.5" stroke="#20b0d0" stroke-width="1" fill="none"/><rect x="3" y="3" width="3" height="1.5" fill="#e04020"/></svg>
<div class="a" style="left:787.5px;top:131.3px;width:9px;height:1.2px;background:#f8f8ff;border-bottom:0.6px solid #b0b0c0"></div>
<svg width="10" height="10" style="left:788.2px;top:136px" viewBox="0 0 10 10"><path d="M0.5,3.5 Q1,1 3,1.5 L8.5,6 L6.5,8.5 L2.5,5" fill="#e8d8c8" stroke="#806050" stroke-width="0.5"/><path d="M4,2 L8,5" stroke="#202020" stroke-width="1.4"/><circle cx="2" cy="6" r="1" fill="#e04040"/></svg>
<div class="a" style="left:787.5px;top:166.5px;width:9px;height:1.2px;background:#f8f8ff;border-bottom:0.6px solid #b0b0c0"></div>
<svg width="10" height="10" style="left:787.7px;top:172px" viewBox="0 0 10 10"><path d="M0.5,5 L5.5,3 L8.5,5 L3.5,8.5Z" fill="#7a20d8"/><path d="M0.5,5 L3.5,8.5 V9.5 L0.5,6Z" fill="#4010a0"/><path d="M4,5 L8,0.8" stroke="#d8c830" stroke-width="1.3"/></svg>
<svg width="10" height="10" style="left:787.7px;top:184px" viewBox="0 0 10 10"><path d="M3,1 L8,2 L7,8 L2.5,8.5Z" fill="#7a20d8"/><circle cx="3" cy="4" r="2.3" fill="#e8e8d8"/><path d="M1,3.5 H5" stroke="#c0a020" stroke-width="1"/></svg>
<svg width="10" height="10" style="left:787.7px;top:196px" viewBox="0 0 10 10"><path d="M0.5,8 L4.5,2 L8.5,3 L8.5,6 L4.5,8.8Z" fill="#7a20d8"/><path d="M2,6 L6,3.5" stroke="#e8e8f0" stroke-width="0.6"/></svg>
<svg width="10" height="10" style="left:787.7px;top:207px" viewBox="0 0 10 10"><path d="M0.5,7.5 L4,2.5 L6,1 L8.5,3 L5,8.5Z" fill="#7a20d8"/><path d="M3,6.5 L7,3" stroke="#e8e8f0" stroke-width="0.6"/></svg>
<svg width="10" height="10" style="left:787.7px;top:218.5px" viewBox="0 0 10 10"><path d="M0.5,3 L4.5,0.5 L8.5,2.5 V7.5 L4.5,9.5 L0.5,7.5Z" fill="#7a20d8"/><path d="M0.8,3 L4.5,1 L8.2,2.8 L4.5,5Z" fill="#40e8f0"/></svg>
<svg width="10" height="10" style="left:787.7px;top:231px" viewBox="0 0 10 10"><path d="M0.5,5.5 L5,1 L8.5,2 L4,7.5Z" fill="#40d8f0" stroke="#7a20d8" stroke-width="0.8"/></svg>
<svg width="10" height="10" style="left:787.7px;top:243px" viewBox="0 0 10 10"><path d="M0.5,2.5 L5,0.5 L8,2 V7 L4,9 L0.5,7.5Z" fill="#7a20d8"/><path d="M5,2.5 L8,2 V7 L5,8Z" fill="#40d8f0"/></svg>
<svg width="4" height="3" style="left:796px;top:250px" viewBox="0 0 4 3"><path d="M0.2,0.3 H3.2 L1.7,2Z" fill="#000"/></svg>
<svg width="10" height="10" style="left:787.7px;top:254.5px" viewBox="0 0 10 10"><path d="M1,7 Q1,2 5.5,1 L8,2 Q8,7 3.5,9Z" fill="#7a20d8"/><path d="M4,7 Q4.5,4 6.5,2.5" stroke="#40d8f0" stroke-width="1"/></svg>
<svg width="10" height="10" style="left:787.7px;top:266px" viewBox="0 0 10 10"><rect x="0.7" y="1" width="7.5" height="8" fill="#7a20d8"/><rect x="3.5" y="2.5" width="2.5" height="6.5" fill="#40e0f0"/></svg>
<svg width="10" height="10" style="left:787.7px;top:278px" viewBox="0 0 10 10"><rect x="0.7" y="1" width="7.5" height="8" fill="#7a20d8"/><rect x="2" y="2.5" width="5" height="5" fill="#60c8e0"/><path d="M3,3 L6,7 M6,3 L3,7" stroke="#d050d0" stroke-width="0.6"/></svg>
<svg width="10" height="10" style="left:787.7px;top:289.5px" viewBox="0 0 10 10"><circle cx="3" cy="3" r="2.3" fill="#7a20d8"/><circle cx="6" cy="6" r="2.8" fill="#7a20d8"/><circle cx="3" cy="7" r="2" fill="#8a30e0"/></svg>
<svg width="4" height="3" style="left:796px;top:296.5px" viewBox="0 0 4 3"><path d="M0.2,0.3 H3.2 L1.7,2Z" fill="#000"/></svg>
<svg width="10" height="10" style="left:787.7px;top:300.5px" viewBox="0 0 10 10"><circle cx="4.5" cy="5" r="4" fill="#7a20d8"/><path d="M2,7 L7,2" stroke="#f02020" stroke-width="1"/><circle cx="4.5" cy="5" r="1.6" fill="#40d0f0"/></svg>
<!-- RS END -->
<!-- STATUS BAR -->
<div class="t" style="left:1.3px;top:426.5px;font-size:5.5px;color:#3a2440;transform:scaleX(0.92);transform-origin:0 0">inertia/hood preselected</div>
<div class="a" style="left:647px;top:424px;width:125px;height:8.5px;background:#fff;border-left:0.5px solid #c0c0d0"></div>
<div class="a" style="left:772px;top:423.5px;width:13px;height:9.5px;background:#cacade;border:0.5px solid #f4f4fb"></div>
<div class="a" style="left:786px;top:423.5px;width:14px;height:9.5px;background:#cacade;border:0.5px solid #f4f4fb"></div>

<!-- TASKBAR -->
<div class="a" style="left:0;top:433px;width:20px;height:17px;background:#1f3a43"></div>
<svg width="9" height="9" style="left:6.2px;top:437.6px" viewBox="0 0 9 9"><path d="M0,1.2 L3.3,0.7 V3.8 H0Z M3.9,0.6 L7.5,0 V3.8 H3.9Z M0,4.3 H3.3 V7.3 L0,6.8Z M3.9,4.3 H7.5 V8 L3.9,7.5Z" fill="#fff"/></svg>
<div class="a" style="left:20px;top:433px;width:143px;height:17px;background:#f1f1f1"></div>
<svg width="10" height="10" style="left:24.5px;top:437px" viewBox="0 0 10 10"><circle cx="5.2" cy="3.3" r="2.3" fill="none" stroke="#333" stroke-width="0.7"/><path d="M3.6,5 L1,7.8" stroke="#333" stroke-width="0.8"/></svg>
<div class="t" style="left:36.9px;top:439.1px;font-size:6.6px;color:#333;transform:scaleX(0.91);transform-origin:0 0">Type here to search</div>
<svg width="10" height="10" style="left:169.5px;top:437px" viewBox="0 0 10 10"><circle cx="3.8" cy="4.5" r="3" fill="none" stroke="#fff" stroke-width="0.8"/></svg>
<svg width="10" height="10" style="left:189.5px;top:437.5px" viewBox="0 0 10 10"><rect x="1.8" y="1" width="4.5" height="6" fill="none" stroke="#fff" stroke-width="0.7"/><path d="M0.5,2 V6 M7.5,2 V6" stroke="#fff" stroke-width="0.7"/></svg>

<!-- FTB START -->
<div class="a" style="left:244.7px;top:-1px;width:235.5px;height:22px;background:#fff;box-shadow:0.6px 0.8px 0.8px rgba(0,0,0,0.35)"></div>
<div class="a" style="left:244.7px;top:7.5px;width:235.5px;height:12.8px;background:linear-gradient(#f0f0f8,#dcdcec 60%,#c8c8d8)"></div>
<div class="a" style="left:244.7px;top:20.2px;width:235.5px;height:0.8px;background:#8a8a98"></div>
<div class="t" style="left:249px;top:-1.2px;font-size:4.8px;color:#555">Tools</div>
<div class="a" style="left:472px;top:-1px;width:8px;height:5.5px;background:#d8454a"></div>
<svg width="8" height="5.5" style="left:472px;top:-1px" viewBox="0 0 8 5.5"><path d="M3.0,1.75 L5.0,3.75 M5.0,1.75 L3.0,3.75" stroke="#fff" stroke-width="0.6"/></svg>
<svg width="10" height="10" style="left:248.3px;top:10px" viewBox="0 0 10 10"><path d="M4.3,0.6 Q8.2,0.8 8.1,4.4 Q8,8 4.3,8 Q0.6,8 0.6,4.4 Q0.8,2 3,1.8 Q6.2,1.8 6.3,4.4 Q6.2,6.2 4.3,6.2 Q2.4,6 2.6,4.3 Q2.8,3.3 4,3.4" stroke="#989898" stroke-width="1.1" fill="none"/></svg>
<svg width="10" height="10" style="left:260px;top:10px" viewBox="0 0 10 10"><circle cx="4.5" cy="4.5" r="4.1" fill="#1c60b0"/><circle cx="4.5" cy="4.5" r="3" fill="#e8e870"/><path d="M3,4.5 Q3,2 5,2.5 L7,4 L7,8 L4,8.5Z" fill="#fff" stroke="#888" stroke-width="0.4"/><path d="M1.3,4 Q1.5,7 3,8" stroke="#30b0a0" stroke-width="0.8" fill="none"/></svg>
<svg width="10" height="10" style="left:271.5px;top:10px" viewBox="0 0 10 10"><path d="M4,0.5 V5 L0.8,8.3 M4,5 L8,6.8" stroke="#a09060" stroke-width="0.6" fill="none"/><circle cx="4" cy="0.8" r="0.7" fill="#303080"/><circle cx="0.8" cy="8.2" r="0.7" fill="#303080"/><circle cx="8" cy="6.8" r="0.7" fill="#303080"/></svg>
<svg width="4" height="3" style="left:279px;top:18.2px" viewBox="0 0 4 3"><path d="M0.2,0.3 H3.2 L1.7,2Z" fill="#000"/></svg>
<svg width="10" height="10" style="left:283px;top:10px" viewBox="0 0 10 10"><path d="M3,2 H8.5 M0.5,3.8 H8.5 M2.5,5.6 H8.5 M4,7.4 H8.5" stroke="#4a70f0" stroke-width="1"/><path d="M3,2 H5.5 M0.5,3.8 H2.5 M2.5,5.6 H4" stroke="#30a0f0" stroke-width="1"/></svg>
<svg width="10" height="10" style="left:294.8px;top:10px" viewBox="0 0 10 10"><rect x="0.3" y="0.5" width="8" height="8" fill="#5a80f0"/><path d="M0.3,2.5 H8.3 M0.3,4.5 H8.3 M0.3,6.5 H8.3 M2.3,0.5 V8.5 M4.3,0.5 V8.5 M6.3,0.5 V8.5" stroke="#c8d8f8" stroke-width="0.6"/></svg>
<svg width="4" height="3" style="left:302.3px;top:18.2px" viewBox="0 0 4 3"><path d="M0.2,0.3 H3.2 L1.7,2Z" fill="#000"/></svg>
<svg width="10" height="10" style="left:307.5px;top:10px" viewBox="0 0 10 10"><path d="M1.2,1.5 L2.5,0.5 H7 V8 L5.8,9 H1.2Z" fill="#3a8a80" stroke="#304040" stroke-width="0.4"/><rect x="2" y="2" width="4" height="5.5" fill="#40e8f0"/><path d="M2,3.8 H6 M2,5.6 H6 M4,2 V7.5" stroke="#208080" stroke-width="0.5"/></svg>
<svg width="4" height="3" style="left:313.7px;top:18.2px" viewBox="0 0 4 3"><path d="M0.2,0.3 H3.2 L1.7,2Z" fill="#000"/></svg>
<svg width="10" height="10" style="left:318.8px;top:10px" viewBox="0 0 10 10"><path d="M0.5,2.5 L2.5,0.5 H7.5 V6.5 L5.5,8.5 H0.5Z" fill="#20a0a8" stroke="#204850" stroke-width="0.5"/><path d="M0.5,2.5 H5.5 V8.5 M5.5,2.5 L7.5,0.5" stroke="#104040" stroke-width="0.4" fill="none"/><path d="M3,4 V7" stroke="#104850" stroke-width="0.6"/></svg>
<svg width="10" height="10" style="left:329.6px;top:10px" viewBox="0 0 10 10"><path d="M1,1 V8.5 M8,1 V8.5 M1,1 H8 M1,8.5 H8" stroke="#30c0c0" stroke-width="0.9" stroke-dasharray="1 1.6"/><path d="M5,5 L8,1.5" stroke="#303040" stroke-width="0.9"/></svg>
<svg width="10" height="10" style="left:341px;top:10px" viewBox="0 0 10 10"><path d="M0.5,0.5 L3.5,4 L8.5,7.5" stroke="#4080e0" stroke-width="0.8" fill="none"/><path d="M4,2 L3,8.5" stroke="#e02020" stroke-width="1.2"/><path d="M4.5,7.5 H8.5" stroke="#30a0f0" stroke-width="0.9"/></svg>
<svg width="10" height="10" style="left:352.8px;top:10px" viewBox="0 0 10 10"><path d="M0.5,4 Q1.5,1 5,1 Q8,1 7.5,3 Q6,5.5 2,6 Q1,8.5 5,8.5" stroke="#b8b8c0" stroke-width="0.9" fill="none"/><path d="M2,4 Q4,2.5 6.5,2.5" stroke="#d0d0d8" stroke-width="0.6" fill="none"/></svg>
<svg width="10" height="10" style="left:364.5px;top:10px" viewBox="0 0 10 10"><rect x="0.5" y="0.5" width="1.8" height="8.5" fill="#4a70f0"/><path d="M2.5,1.5 H5 M2.5,4.5 H4.5 M2.5,7.5 H5" stroke="#60b0f0" stroke-width="0.9"/><path d="M2,4.5 L4,4.5" stroke="#202020" stroke-width="1"/><path d="M5.5,5 H9" stroke="#4080f0" stroke-width="1"/></svg>
<svg width="10" height="10" style="left:376.2px;top:10px" viewBox="0 0 10 10"><circle cx="5" cy="4.8" r="3" fill="#f0f020" stroke="#4060a0" stroke-width="0.5"/><path d="M1,3 Q2,0.5 4.5,1" stroke="#5070c0" stroke-width="0.5" fill="none"/><path d="M6.8,6.8 L9,9" stroke="#111" stroke-width="1.2"/><path d="M2,7 Q3,6 5,7.5" stroke="#30a0d0" stroke-width="0.5" fill="none"/></svg>
<svg width="10" height="10" style="left:389.5px;top:10px" viewBox="0 0 10 10"><path d="M0.8,1 H5 M0.8,3.5 H5 M0.8,6 H5 M0.8,8.5 H5" stroke="#4a70f0" stroke-width="1.1"/><path d="M1.5,2.2 H4 M1.5,4.7 H4" stroke="#40c0e0" stroke-width="0.5"/></svg>
<svg width="10" height="10" style="left:399.5px;top:10px" viewBox="0 0 10 10"><path d="M0.5,5 L5,0.5 L9,3.5 L4.5,8.5Z" fill="#d8e4f8" stroke="#2050e0" stroke-width="0.9"/><path d="M2.5,5 L5.5,2.5" stroke="#2050e0" stroke-width="0.5"/></svg>
<div class="a" style="left:410.2px;top:9.5px;width:68px;height:9.9px;background:#fff;border:0.5px solid #d0d0dc;border-bottom:0.8px solid #9090a0"></div>
<div class="t" style="left:411.3px;top:12.6px;font-size:5.2px;color:#333">inertia</div>
<svg width="5" height="3" style="left:473.5px;top:12.6px" viewBox="0 0 5 3"><path d="M0.5,0.8 L2.2,2.4 L3.9,0.8" stroke="#555" stroke-width="0.55" fill="none"/></svg>
<div class="a" style="left:731px;top:-1px;width:15.2px;height:24px;background:#fff;box-shadow:0.6px 0.8px 0.8px rgba(0,0,0,0.35)"></div>
<div class="a" style="left:731px;top:9.4px;width:15.2px;height:13.6px;background:linear-gradient(#e8e8f4,#c8c8d8)"></div>
<div class="t" style="left:733.5px;top:-0.4px;font-size:4.8px;color:#3080c0">V</div>
<div class="a" style="left:738px;top:-1px;width:7.6px;height:7.4px;background:#d8454a"></div>
<svg width="7.6" height="7.4" style="left:738px;top:-1px" viewBox="0 0 7.6 7.4"><path d="M2.8,2.7 L4.8,4.7 M4.8,2.7 L2.8,4.7" stroke="#fff" stroke-width="0.6"/></svg>
<svg width="12" height="11" style="left:734px;top:11.5px" viewBox="0 0 12 11"><path d="M0.5,9.5 L3,5 L11,1 L8,7Z" fill="#e89838"/><path d="M0.8,2.5 L3.5,0.8 L9.5,5 L7,8Z" fill="#282828"/><path d="M2.5,2.3 L4,1.6 L5.5,3 L4,3.8Z M5.5,4.5 L7,3.8 L8.2,5.2 L6.8,6.2Z" fill="#f0f0f0"/></svg>
<div class="a" style="left:578px;top:21px;width:84.7px;height:26px;background:#fff;box-shadow:0.7px 0.8px 0.8px rgba(0,0,0,0.4)"></div>
<div class="a" style="left:578px;top:36px;width:84.7px;height:11px;background:linear-gradient(#ececf6,#d4d4e4 70%,#c0c0d0)"></div>
<div class="t" style="left:581.5px;top:25.8px;font-size:4.9px;color:#333">Surfaces</div>
<div class="a" style="left:654.5px;top:24.3px;width:7.2px;height:6.8px;background:#d8454a"></div>
<svg width="7.2" height="6.8" style="left:654.5px;top:24.3px" viewBox="0 0 7.2 6.8"><path d="M2.6,2.4 L4.6,4.4 M4.6,2.4 L2.6,4.4" stroke="#fff" stroke-width="0.6"/></svg>
<svg width="10" height="10" style="left:581px;top:37px" viewBox="0 0 10 10"><path d="M0.5,7 L4,5 L8.5,6.5 L5,8.8Z" fill="#60c8e0" stroke="#5070a0" stroke-width="0.4"/><path d="M3,6 L6.5,1.5" stroke="#f0a040" stroke-width="1.2"/><circle cx="7" cy="1.2" r="1" fill="#f0a040"/></svg>
<svg width="4" height="3" style="left:588px;top:44.8px" viewBox="0 0 4 3"><path d="M0.2,0.3 H3.2 L1.7,2Z" fill="#000"/></svg>
<svg width="10" height="10" style="left:592.5px;top:37px" viewBox="0 0 10 10"><path d="M0.5,6 Q4.5,-1 9,6" stroke="#7080f0" stroke-width="1.3" fill="none"/><path d="M1.5,6.5 Q4.5,1 8,6.5" stroke="#40e0f0" stroke-width="1" fill="none"/><rect x="3" y="4.5" width="3" height="2" fill="#e06030"/><path d="M4.5,6.5 V9" stroke="#3040a0" stroke-width="0.8"/></svg>
<svg width="4" height="3" style="left:600.2px;top:44.8px" viewBox="0 0 4 3"><path d="M0.2,0.3 H3.2 L1.7,2Z" fill="#000"/></svg>
<svg width="10" height="10" style="left:604.5px;top:37px" viewBox="0 0 10 10"><path d="M0.5,3 L3,1.5 L8.5,4.5 L6,8.5 L1.5,6.5Z" fill="#50d8f0" stroke="#203060" stroke-width="0.6"/><path d="M0.5,1 L2,3" stroke="#222" stroke-width="0.8"/></svg>
<svg width="4" height="3" style="left:612px;top:44.8px" viewBox="0 0 4 3"><path d="M0.2,0.3 H3.2 L1.7,2Z" fill="#000"/></svg>
<svg width="10" height="10" style="left:616px;top:37px" viewBox="0 0 10 10"><path d="M0.5,8 Q4.5,-1 8.5,8Z" fill="#40c8e8" stroke="#304090" stroke-width="0.5"/><path d="M2,6.5 Q4.5,1.5 7,6.5" stroke="#f0c040" stroke-width="1" fill="none"/><path d="M0.5,8 H8.5" stroke="#30c0e0" stroke-width="1"/></svg>
<svg width="10" height="10" style="left:627.5px;top:37px" viewBox="0 0 10 10"><path d="M1,8 Q1,0.5 4.5,0.5 Q8,0.5 8,8 L6.5,8 Q6.5,3 4.5,3 Q2.5,3 2.5,8Z" fill="#50d8b0" stroke="#306040" stroke-width="0.5"/><path d="M2,5 Q4.5,2.5 7,5" stroke="#e0c040" stroke-width="0.6" fill="none"/></svg>
<svg width="10" height="10" style="left:639px;top:37px" viewBox="0 0 10 10"><path d="M3.5,5 L8.5,2 L6,8.5Z" fill="#30c0d0"/><path d="M0.5,0.5 L3,3 M2.5,0.5 L1,3" stroke="#404060" stroke-width="0.5"/><path d="M4,4 L2,1" stroke="#e04040" stroke-width="0.5"/></svg>
<svg width="10" height="10" style="left:650.5px;top:37px" viewBox="0 0 10 10"><path d="M0.5,3 L7.5,0.5 L8.5,3 L1.5,5.5Z" fill="#40d0f0" stroke="#2050c0" stroke-width="0.4"/><path d="M0.5,6 L7.5,3.5 L8.5,6 L1.5,8.5Z" fill="#40d0f0" stroke="#2050c0" stroke-width="0.4"/><path d="M1,4.5 L8,2" stroke="#f0d020" stroke-width="1"/></svg>
<div class="a" style="left:710.2px;top:18.3px;width:14.5px;height:108px;background:linear-gradient(to right,#f4f4fa,#dcdcec 60%,#c8c8d8);box-shadow:0.7px 0.8px 0.8px rgba(0,0,0,0.4)"></div>
<div class="a" style="left:710.2px;top:18.3px;width:14.5px;height:13px;background:#fff"></div>
<div class="t" style="left:712.2px;top:22.4px;font-size:4.8px;color:#3080c0">V</div>
<div class="a" style="left:716.4px;top:21px;width:7.8px;height:6.8px;background:#d8454a"></div>
<svg width="7.8" height="6.8" style="left:716.4px;top:21px" viewBox="0 0 7.8 6.8"><path d="M2.9,2.4 L4.9,4.4 M4.9,2.4 L2.9,4.4" stroke="#fff" stroke-width="0.6"/></svg>
<svg width="10" height="10" style="left:712.8px;top:34.5px" viewBox="0 0 10 10"><circle cx="4.5" cy="4.5" r="1" fill="#1a1a60"/><circle cx="4.5" cy="4.5" r="0.5" fill="#40a0f0"/></svg>
<svg width="4" height="3" style="left:720.8px;top:42.5px" viewBox="0 0 4 3"><path d="M0.2,0.3 H3.2 L1.7,2Z" fill="#000"/></svg>
<svg width="10" height="10" style="left:712.8px;top:45.5px" viewBox="0 0 10 10"><path d="M0.5,8.5 L8.5,0.5" stroke="#2060c0" stroke-width="1"/><path d="M1.5,8 L8,1" stroke="#60c0f0" stroke-width="0.4"/></svg>
<svg width="4" height="3" style="left:720.8px;top:54px" viewBox="0 0 4 3"><path d="M0.2,0.3 H3.2 L1.7,2Z" fill="#000"/></svg>
<svg width="10" height="10" style="left:712.8px;top:57px" viewBox="0 0 10 10"><path d="M0.5,7 L3.5,4 H9 L6,7Z" fill="#f0e080" stroke="#304080" stroke-width="0.5"/></svg>
<svg width="4" height="3" style="left:720.8px;top:65.5px" viewBox="0 0 4 3"><path d="M0.2,0.3 H3.2 L1.7,2Z" fill="#000"/></svg>
<div class="a" style="left:711px;top:68.5px;width:13px;height:0.6px;background:#b0b0c0"></div>
<svg width="10" height="10" style="left:712.8px;top:70px" viewBox="0 0 10 10"><path d="M1,4 Q4,0 7,2" stroke="#40a0b0" stroke-width="0.6" fill="none"/><path d="M0.5,7 Q4,3 8.5,5.5 L8,8 Q4,6 1,9Z" fill="#40d0f0" stroke="#3040d0" stroke-width="0.5"/><path d="M1.5,7 Q4,5 7.5,6.5" stroke="#e0e040" stroke-width="0.8" fill="none"/></svg>
<svg width="4" height="3" style="left:720.8px;top:78px" viewBox="0 0 4 3"><path d="M0.2,0.3 H3.2 L1.7,2Z" fill="#000"/></svg>
<svg width="10" height="10" style="left:712.8px;top:81.8px" viewBox="0 0 10 10"><path d="M0.5,3 L5,0.5 L8.5,2 L7,7 L3,6 L0.5,8.5Z" fill="#30d0f0" stroke="#2040c0" stroke-width="0.5"/><path d="M2,4.5 L6,3" stroke="#e0e040" stroke-width="0.9"/></svg>
<svg width="10" height="10" style="left:712.8px;top:92.5px" viewBox="0 0 10 10"><path d="M0.5,6.5 L5,0.8 L8.5,3 L4.5,8.5Z" fill="#40c8f0" stroke="#2050d0" stroke-width="0.5"/><path d="M1,7 L3,5" stroke="#3040e0" stroke-width="0.9"/></svg>
<svg width="4" height="3" style="left:720.8px;top:100.3px" viewBox="0 0 4 3"><path d="M0.2,0.3 H3.2 L1.7,2Z" fill="#000"/></svg>
<svg width="10" height="10" style="left:712.8px;top:104px" viewBox="0 0 10 10"><circle cx="4.3" cy="4.5" r="3.5" fill="none" stroke="#3080c0" stroke-width="0.9"/></svg>
<svg width="4" height="3" style="left:720.8px;top:112.2px" viewBox="0 0 4 3"><path d="M0.2,0.3 H3.2 L1.7,2Z" fill="#000"/></svg>
<svg width="10" height="10" style="left:712.8px;top:114.5px" viewBox="0 0 10 10"><path d="M2,2.5 Q4.5,0 6.5,2 Q7.5,4 4,6 Q1.5,7.5 2.5,8.5 Q5,9.5 7.5,8" stroke="#3070d0" stroke-width="0.9" fill="none"/></svg>
<svg width="4" height="3" style="left:720.8px;top:122.5px" viewBox="0 0 4 3"><path d="M0.2,0.3 H3.2 L1.7,2Z" fill="#000"/></svg>
<div class="a" style="left:737.3px;top:143.3px;width:14.3px;height:47px;background:linear-gradient(to right,#f0f0f8,#d8d8e8 60%,#c4c4d4);box-shadow:0.7px 0px 0.8px rgba(0,0,0,0.4)"></div>
<div class="a" style="left:737.3px;top:143.3px;width:14.3px;height:11.8px;background:#fff"></div>
<div class="t" style="left:739px;top:146.5px;font-size:4.8px;color:#3080c0">C</div>
<div class="a" style="left:743.5px;top:145.8px;width:7.5px;height:6.5px;background:#d8454a"></div>
<svg width="7.5" height="6.5" style="left:743.5px;top:145.8px" viewBox="0 0 7.5 6.5"><path d="M2.75,2.25 L4.75,4.25 M4.75,2.25 L2.75,4.25" stroke="#fff" stroke-width="0.6"/></svg>
<svg width="10" height="10" style="left:739.8px;top:158px" viewBox="0 0 10 10"><rect x="0.5" y="0.5" width="3.6" height="3.6" fill="#3060d0"/><rect x="4.6" y="0.5" width="3.6" height="3.6" fill="#30b0e0"/><rect x="0.5" y="4.6" width="3.6" height="3.6" fill="#30d0f0"/><rect x="4.6" y="4.6" width="3.6" height="3.6" fill="#3060d0"/></svg>
<svg width="4" height="3" style="left:747.5px;top:166px" viewBox="0 0 4 3"><path d="M0.2,0.3 H3.2 L1.7,2Z" fill="#000"/></svg>
<svg width="10" height="10" style="left:739.8px;top:168.5px" viewBox="0 0 10 10"><path d="M0.5,3 L7,0.5 L8.5,3 L2,5.5Z" fill="#f0f0f8" stroke="#606080" stroke-width="0.4"/><path d="M0.5,8 L4,4.5 L7,6 L8.5,4" stroke="#3070e0" stroke-width="1.1" fill="none"/><path d="M3.5,5 L7,3" stroke="#e0e040" stroke-width="1"/></svg>
<svg width="4" height="3" style="left:747.5px;top:176.2px" viewBox="0 0 4 3"><path d="M0.2,0.3 H3.2 L1.7,2Z" fill="#000"/></svg>
<svg width="10" height="10" style="left:739.8px;top:179.5px" viewBox="0 0 10 10"><circle cx="2.5" cy="2.5" r="2" fill="#50c8e0" stroke="#304060" stroke-width="0.4"/><circle cx="6.5" cy="6.5" r="2" fill="#50c8e0" stroke="#304060" stroke-width="0.4"/><path d="M2.5,4.5 L3,9 L8,9" stroke="#f08020" stroke-width="0.9" fill="none"/></svg>
<svg width="60" height="40" style="left:700px;top:45px" viewBox="700 45 60 40">
<path d="M724.5,53.2 L733.6,52.4 L726.2,62.7 L731.1,78.3 L724.5,77.5Z" fill="#1e4a5c" stroke="#b8a8e8" stroke-width="0.8"/>
<path d="M741.8,48.3 Q749.5,57 747.6,64 Q746.3,72 740.6,76.9 L738.1,73.4 L734.4,59.4Z" fill="#1e4a5c" stroke="#b8a8e8" stroke-width="0.8"/>
<path d="M726,62.5 H739" stroke="#c0b0e8" stroke-width="1"/>
<rect x="738.9" y="61" width="3.7" height="3.7" fill="#f01010"/>
<path d="M736,51.5 L737.3,53.2 L738.8,51.5 M737.3,53.2 V55" stroke="#d8c030" stroke-width="0.6" fill="none"/>
<path d="M733.8,77 L736.5,79.8 M736.5,77 L733.8,79.8" stroke="#d8c030" stroke-width="0.6"/>
<circle cx="705.5" cy="63.5" r="1.3" fill="#e8d8f0"/>
<path d="M701,63.5 H709" stroke="#e0d0f0" stroke-width="0.6"/>
<path d="M707,62 L709,65 M709,62 L707,65" stroke="#d8c030" stroke-width="0.6"/>
</svg>
<!-- FTB END -->
<!-- DLG START -->
<div class="a" style="left:776.5px;top:285px;width:2.8px;height:116px;background:linear-gradient(to right,#e8e8f0,#b8b8c8)"></div>
<div class="a" style="left:777px;top:289.4px;width:2.3px;height:7.3px;background:#c84848"></div>
<div class="a" style="left:777px;top:334.5px;width:2.3px;height:6px;background:#505060"></div>
<div class="a" style="left:777px;top:343.3px;width:2.3px;height:8px;background:#c05050"></div>
<div class="a" style="left:581.2px;top:189.2px;width:196.8px;height:211.8px;background:linear-gradient(to bottom,#efe2d4 0,#f0e4d2 60px,#f8e6c8 130px,#fde8c0 211px);border:0.6px solid #2c2c58;border-right-color:#9a9ab0;border-bottom-color:#8a8aa0"></div>
<div class="a" style="left:581.8px;top:189.8px;width:195.6px;height:13px;background:#fff"></div>
<div class="t" style="left:586px;top:194.18px;font-size:5.2px;color:#9a9a9a;transform:scaleX(0.96);transform-origin:0 0">Measure Inertia</div>
<div class="t" style="left:747.8px;top:193.98px;font-size:5.2px;color:#555;transform:scaleX(0.96);transform-origin:0 0">?</div>
<svg width="5" height="5" style="left:765.8px;top:194px" viewBox="0 0 5 5"><path d="M0.3,0.3 L4.5,4.5 M4.5,0.3 L0.3,4.5" stroke="#666" stroke-width="0.55"/></svg>
<div class="t" style="left:587.6px;top:209.18px;font-size:5.2px;color:#2a2a2a;transform:scaleX(0.96);transform-origin:0 0">Definition</div>
<div class="a" style="left:612px;top:211px;width:160.5px;height:1.8px;background:#d2c9bf;border-bottom:0.6px solid #fffaf2"></div>
<div class="a" style="left:587px;top:216.5px;width:11px;height:11.3px;background:#f4ece0;border:0.7px solid #888;border-right-color:#fff;border-bottom-color:#fff"></div>
<svg width="10" height="10" style="left:588px;top:217.5px" viewBox="0 0 10 10"><ellipse cx="1.8" cy="3.5" rx="1.3" ry="1.9" fill="#7a6a10"/><path d="M3.5,1 V5 M3.5,5 H8 M3.5,5 L1,8.5" stroke="#2020e0" stroke-width="0.9"/><path d="M5,4.5 H8.5" stroke="#10c010" stroke-width="0.9"/><path d="M1,8.5 L3.5,6" stroke="#e02020" stroke-width="0.9"/></svg>
<div class="a" style="left:598.5px;top:216.5px;width:11.5px;height:11px;background:#f0e6d8;border:0.7px solid #fff;border-right-color:#a09890;border-bottom-color:#a09890"></div>
<svg width="10" height="10" style="left:599.5px;top:217.5px" viewBox="0 0 10 10"><ellipse cx="1.8" cy="3.3" rx="1.3" ry="1.9" fill="#7a6a10"/><path d="M5,0.8 V8.5" stroke="#10c010" stroke-width="0.9"/><path d="M2.5,5.5 H8.5" stroke="#e02020" stroke-width="0.9"/></svg>
<div class="t" style="left:612px;top:220.18px;font-size:5.2px;color:#2a2a2a;transform:scaleX(0.96);transform-origin:0 0">Selection :</div>
<div class="a" style="left:635.5px;top:218px;width:137.5px;height:8.599999999999994px;background:#f0f0f0;border:0.6px solid #a8a8a8;border-right-color:#e8e8e8;border-bottom-color:#e8e8e8;box-shadow:0 0 0 0.5px #d8d0c0"></div>
<div class="t" style="left:638.0px;top:219.88px;font-size:5.2px;color:#111;transform:scaleX(0.96);transform-origin:0 0">Face...Fill.1...hood</div>
<div class="t" style="left:588px;top:232.38px;font-size:5.2px;color:#2a2a2a;transform:scaleX(0.96);transform-origin:0 0">Result</div>
<div class="a" style="left:605px;top:234px;width:167.5px;height:1.8px;background:#d2c9bf;border-bottom:0.6px solid #fffaf2"></div>
<div class="t" style="left:588px;top:241.98px;font-size:5.2px;color:#2a2a2a;transform:scaleX(0.96);transform-origin:0 0">Calculation mode :</div>
<div class="t" style="left:634.5px;top:241.98px;font-size:5.2px;color:#2a2a2a;transform:scaleX(0.96);transform-origin:0 0">Exact</div>
<div class="t" style="left:588px;top:250.98px;font-size:5.2px;color:#2a2a2a;transform:scaleX(0.96);transform-origin:0 0">Type :</div>
<div class="t" style="left:606px;top:250.98px;font-size:5.2px;color:#2a2a2a;transform:scaleX(0.96);transform-origin:0 0">Surface</div>
<div class="a" style="left:587.8px;top:263.5px;width:70.70000000000005px;height:14.199999999999989px;border:0.6px solid #d8ccb8;box-shadow:inset 0.5px 0.5px 0 #fff8ee,0.5px 0.5px 0 #fff8ee"></div>
<div class="a" style="left:590px;top:261.5px;width:34px;height:4px;background:#f2e4d0"></div>
<div class="t" style="left:591.2px;top:260.78px;font-size:5.2px;color:#2a2a2a;transform:scaleX(0.96);transform-origin:0 0">Characteristics</div>
<div class="t" style="left:591px;top:269.38px;font-size:5.2px;color:#2a2a2a;transform:scaleX(0.96);transform-origin:0 0">Area</div>
<div class="a" style="left:608.5px;top:267.3px;width:48.0px;height:8.0px;background:#f0f0f0;border:0.6px solid #a8a8a8;border-right-color:#e8e8e8;border-bottom-color:#e8e8e8;box-shadow:0 0 0 0.5px #d8d0c0"></div>
<div class="t" style="left:611.0px;top:268.88px;font-size:5.2px;color:#111;transform:scaleX(0.96);transform-origin:0 0">0.01m2</div>
<div class="a" style="left:660.6px;top:263.5px;width:65.89999999999998px;height:32.19999999999999px;border:0.6px solid #d8ccb8;box-shadow:inset 0.5px 0.5px 0 #fff8ee,0.5px 0.5px 0 #fff8ee"></div>
<div class="a" style="left:662.7px;top:261.5px;width:47.5px;height:4px;background:#f2e4d0"></div>
<div class="t" style="left:663.7px;top:260.78px;font-size:5.2px;color:#2a2a2a;transform:scaleX(0.96);transform-origin:0 0">Center Of Gravity (G)</div>
<div class="t" style="left:663.5px;top:269.08px;font-size:5.2px;color:#2a2a2a;transform:scaleX(0.96);transform-origin:0 0">Gx</div>
<div class="a" style="left:677.3px;top:267.5px;width:47.5px;height:7.800000000000011px;background:#f0f0f0;border:0.6px solid #a8a8a8;border-right-color:#e8e8e8;border-bottom-color:#e8e8e8;box-shadow:0 0 0 0.5px #d8d0c0"></div>
<div class="t" style="left:679.8px;top:268.98px;font-size:5.2px;color:#111;transform:scaleX(0.96);transform-origin:0 0">5mm</div>
<div class="t" style="left:663.5px;top:278.58px;font-size:5.2px;color:#2a2a2a;transform:scaleX(0.96);transform-origin:0 0">Gy</div>
<div class="a" style="left:677.3px;top:277px;width:47.5px;height:7.800000000000011px;background:#f0f0f0;border:0.6px solid #a8a8a8;border-right-color:#e8e8e8;border-bottom-color:#e8e8e8;box-shadow:0 0 0 0.5px #d8d0c0"></div>
<div class="t" style="left:679.8px;top:278.48px;font-size:5.2px;color:#111;transform:scaleX(0.96);transform-origin:0 0">743.067mm</div>
<div class="t" style="left:663.5px;top:287.58px;font-size:5.2px;color:#2a2a2a;transform:scaleX(0.96);transform-origin:0 0">Gz</div>
<div class="a" style="left:677.3px;top:286.3px;width:47.5px;height:7.5px;background:#f0f0f0;border:0.6px solid #a8a8a8;border-right-color:#e8e8e8;border-bottom-color:#e8e8e8;box-shadow:0 0 0 0.5px #d8d0c0"></div>
<div class="t" style="left:679.8px;top:287.63px;font-size:5.2px;color:#111;transform:scaleX(0.96);transform-origin:0 0">-908.551mm</div>
<div class="a" style="left:587.8px;top:307.5px;width:185.6px;height:54px;border:0.6px solid #fff8ee;border-right:0.8px solid #404040;border-bottom:0.8px solid #404040"></div>
<div class="a" style="left:587.8px;top:298.8px;width:32px;height:9.4px;background:#f8e8c8;border:0.6px solid #fff8ee;border-right:0.8px solid #404040;border-bottom:none"></div>
<div class="t" style="left:593px;top:302.18px;font-size:5.2px;color:#2a2a2a;transform:scaleX(0.96);transform-origin:0 0">Inertia / G</div>
<div class="a" style="left:590.6px;top:315px;width:179.19999999999993px;height:23.19999999999999px;border:0.6px solid #d8ccb8;box-shadow:inset 0.5px 0.5px 0 #fff8ee,0.5px 0.5px 0 #fff8ee"></div>
<div class="a" style="left:592.5px;top:313px;width:39px;height:4px;background:#f7e6c9"></div>
<div class="t" style="left:593.5px;top:312.58px;font-size:5.2px;color:#2a2a2a;transform:scaleX(0.96);transform-origin:0 0">Inertia Matrix / G</div>
<div class="t" style="left:593px;top:321.28px;font-size:5.2px;color:#2a2a2a;transform:scaleX(0.96);transform-origin:0 0">IoxG</div>
<div class="a" style="left:610.4px;top:319.8px;width:69.0px;height:7.5px;background:#f0f0f0;border:0.6px solid #a8a8a8;border-right-color:#e8e8e8;border-bottom-color:#e8e8e8;box-shadow:0 0 0 0.5px #d8d0c0"></div>
<div class="t" style="left:612.9px;top:321.13px;font-size:5.2px;color:#111;transform:scaleX(0.96);transform-origin:0 0">1.141e-006m4</div>
<div class="t" style="left:593px;top:329.98px;font-size:5.2px;color:#2a2a2a;transform:scaleX(0.96);transform-origin:0 0">IoyG</div>
<div class="a" style="left:610.4px;top:328.8px;width:69.0px;height:7.5px;background:#f0f0f0;border:0.6px solid #a8a8a8;border-right-color:#e8e8e8;border-bottom-color:#e8e8e8;box-shadow:0 0 0 0.5px #d8d0c0"></div>
<div class="t" style="left:612.9px;top:330.13px;font-size:5.2px;color:#111;transform:scaleX(0.96);transform-origin:0 0">6.776e-021m4</div>
<div class="t" style="left:681.3px;top:321.08px;font-size:5.2px;color:#2a2a2a;transform:scaleX(0.96);transform-origin:0 0">IozG</div>
<div class="a" style="left:699.2px;top:319.5px;width:69.09999999999991px;height:7.800000000000011px;background:#f0f0f0;border:0.6px solid #a8a8a8;border-right-color:#e8e8e8;border-bottom-color:#e8e8e8;box-shadow:0 0 0 0.5px #d8d0c0"></div>
<div class="t" style="left:701.7px;top:320.98px;font-size:5.2px;color:#111;transform:scaleX(0.96);transform-origin:0 0">1.625e-004m4</div>
<div class="a" style="left:590px;top:344.3px;width:179.79999999999995px;height:14.099999999999966px;border:0.6px solid #d8ccb8;box-shadow:inset 0.5px 0.5px 0 #fff8ee,0.5px 0.5px 0 #fff8ee"></div>
<div class="a" style="left:592px;top:342.3px;width:51px;height:4px;background:#fae7c6"></div>
<div class="t" style="left:593px;top:341.68px;font-size:5.2px;color:#2a2a2a;transform:scaleX(0.96);transform-origin:0 0">Principal Moments / G</div>
<div class="t" style="left:593px;top:350.08px;font-size:5.2px;color:#2a2a2a;transform:scaleX(0.96);transform-origin:0 0">M1</div>
<div class="a" style="left:608px;top:349px;width:71px;height:7.5px;background:#f0f0f0;border:0.6px solid #a8a8a8;border-right-color:#e8e8e8;border-bottom-color:#e8e8e8;box-shadow:0 0 0 0.5px #d8d0c0"></div>
<div class="t" style="left:610.5px;top:350.33px;font-size:5.2px;color:#111;transform:scaleX(0.96);transform-origin:0 0">1.141e-006m4</div>
<div class="t" style="left:682px;top:350.08px;font-size:5.2px;color:#2a2a2a;transform:scaleX(0.96);transform-origin:0 0">M2</div>
<div class="a" style="left:696.4px;top:348.7px;width:71.89999999999998px;height:7.800000000000011px;background:#f0f0f0;border:0.6px solid #a8a8a8;border-right-color:#e8e8e8;border-bottom-color:#e8e8e8;box-shadow:0 0 0 0.5px #d8d0c0"></div>
<div class="t" style="left:698.9px;top:350.18px;font-size:5.2px;color:#111;transform:scaleX(0.96);transform-origin:0 0">1.625e-004m4</div>
<div class="a" style="left:588.5px;top:365.3px;width:5.4px;height:5.6px;background:#fbf6ea;border:0.6px solid #9a9a9a"></div>
<div class="t" style="left:595.2px;top:365.98px;font-size:5.2px;color:#2a2a2a;transform:scaleX(0.96);transform-origin:0 0">Keep measure</div>
<div class="a" style="left:588.5px;top:376.2px;width:5.4px;height:5.6px;background:#f6ecd8;border:0.6px solid #c0b8b0"></div>
<div class="t" style="left:595.2px;top:376.68px;font-size:5.2px;color:#b0b4cc;transform:scaleX(0.96);transform-origin:0 0">Measure only shown elements</div>
<div class="a" style="left:719.8px;top:363.8px;width:19.90000000000009px;height:8.5px;background:linear-gradient(#e8e8f4,#d0d0e4);border:0.6px solid #fff;border-right-color:#8080a0;border-bottom-color:#8080a0"></div>
<div class="t" style="left:722.5px;top:365.78px;font-size:5.2px;color:#222;transform:scaleX(0.96);transform-origin:0 0">Export</div>
<div class="a" style="left:740.8px;top:363.8px;width:32.60000000000002px;height:8.5px;background:linear-gradient(#e8e8f4,#d0d0e4);border:0.6px solid #fff;border-right-color:#8080a0;border-bottom-color:#8080a0"></div>
<div class="t" style="left:743px;top:365.78px;font-size:5.2px;color:#222;transform:scaleX(0.96);transform-origin:0 0">Customize...</div>
<div class="a" style="left:710.4px;top:387.9px;width:28.800000000000068px;height:8.5px;background:linear-gradient(#e8e8f4,#d0d0e4);border:0.6px solid #fff;border-right-color:#8080a0;border-bottom-color:#8080a0"></div>
<svg width="4" height="4" style="left:717.5px;top:390px" viewBox="0 0 4 4"><circle cx="2" cy="2" r="1.8" fill="#10a010"/><circle cx="1.6" cy="1.5" r="0.7" fill="#90f090"/></svg>
<div class="t" style="left:723px;top:389.78px;font-size:5.2px;color:#222;transform:scaleX(0.96);transform-origin:0 0">OK</div>
<div class="a" style="left:743.9px;top:387.9px;width:29.100000000000023px;height:8.5px;background:linear-gradient(#e8e8f4,#d0d0e4);border:0.6px solid #fff;border-right-color:#8080a0;border-bottom-color:#8080a0"></div>
<svg width="4" height="4" style="left:747.5px;top:390px" viewBox="0 0 4 4"><circle cx="2" cy="2" r="1.8" fill="#d01010"/><circle cx="1.6" cy="1.5" r="0.7" fill="#f09090"/></svg>
<div class="t" style="left:753px;top:389.78px;font-size:5.2px;color:#222;transform:scaleX(0.96);transform-origin:0 0">Cancel</div>
<div class="a" style="left:581.8px;top:384px;width:26px;height:16.6px;overflow:hidden"><div class="a" style="left:0px;top:2px;width:26px;height:16px;background:radial-gradient(ellipse at 50% 70%,rgba(250,160,60,0.9) 0,rgba(250,190,110,0.6) 30%,rgba(253,232,192,0) 70%)"></div><div class="a" style="left:-17px;top:8.5px;width:36px;height:32px;border-radius:50%;background:radial-gradient(closest-side,#1c2030 0,#283040 50%,#4a7898 66%,#80c0e0 80%,#a0d8f0 90%,rgba(160,216,240,0) 100%)"></div></div>
<div class="t" style="left:666.7px;top:394.6px;font-size:7px;letter-spacing:0.6px;color:rgba(150,150,160,0.5)">Activate Windows</div>
<div class="t" style="left:666.7px;top:406.2px;font-size:6.1px;color:rgba(235,235,245,0.85)">Go to Settings to activate Windows.</div>
<svg width="4" height="4" style="left:771px;top:401px" viewBox="0 0 4 4"><path d="M0.5,3 L2,1 L3.5,3" stroke="#ccc" stroke-width="0.5" fill="none"/></svg>
<!-- DLG END -->
<!-- TB START -->
<svg width="1" height="1" style="left:205.5px;top:433px" viewBox="0 0 1 1"></svg>
<svg width="12" height="12" style="left:208.8px;top:436.8px" viewBox="0 0 12 12"><path d="M1,6 Q1,1 6,1 Q11,1 11,5.5 Q11,8 8,8 Q5.5,8 5.5,6 Q5.5,4.5 8,4.5 Q7,3 5,3.5 Q2.5,4.5 3,8 Q4,11 8,10.5 Q4,11.5 2,9.5 Q1,8 1,6Z" fill="#1a88d8"/><path d="M6.2,1 Q11,1 11,5.5 Q11,8 8.5,8 L7,6 Q9,6.5 9,4.5 Q8.5,2.5 6.2,1Z" fill="#40c060"/></svg>
<svg width="11" height="11" style="left:229.8px;top:437.5px" viewBox="0 0 11 11"><rect x="0.5" y="1" width="9.5" height="7.5" fill="#f8c830"/><rect x="0.5" y="3" width="9.5" height="5.5" fill="#fbd860"/><rect x="3" y="5.5" width="4.5" height="2" fill="#1a80d0"/></svg>
<div class="a" style="left:227px;top:448.8px;width:16px;height:1.2px;background:#76b9ed"></div>
<svg width="11" height="11" style="left:249.8px;top:436.5px" viewBox="0 0 11 11"><path d="M3.5,2.5 Q3.5,0.5 5.2,0.5 Q7,0.5 7,2.5" stroke="#ddd" stroke-width="0.7" fill="none"/><rect x="0.5" y="2.5" width="9.5" height="7.8" fill="#f4f4f4"/><rect x="2.8" y="4.2" width="2.2" height="2.2" fill="#f25022"/><rect x="5.4" y="4.2" width="2.2" height="2.2" fill="#7fba00"/><rect x="2.8" y="6.8" width="2.2" height="2.2" fill="#00a4ef"/><rect x="5.4" y="6.8" width="2.2" height="2.2" fill="#ffb900"/></svg>
<svg width="14" height="12" style="left:270.3px;top:437px" viewBox="0 0 14 12"><path d="M0.5,3.5 L5,0.5 L9.5,3.5 V8.8 H0.5Z" fill="#3aa8f0"/><path d="M0.5,3.5 L5,6.5 L9.5,3.5" stroke="#e8f4ff" stroke-width="0.9" fill="none"/><circle cx="10" cy="8.3" r="3" fill="#2a2a2a" stroke="#777" stroke-width="0.5"/></svg>
<div class="a" style="left:267.5px;top:448.8px;width:16.3px;height:1.2px;background:#76b9ed"></div>
<svg width="11" height="11" style="left:291px;top:437px" viewBox="0 0 11 11"><ellipse cx="5" cy="4.5" rx="4.6" ry="3.2" fill="#e8e0e0" stroke="#c03030" stroke-width="0.8" transform="rotate(-20 5 4.5)"/><circle cx="6.5" cy="7" r="1.8" fill="#2070d0"/></svg>
<div class="a" style="left:288px;top:448.8px;width:16px;height:1.2px;background:#76b9ed"></div>
<svg width="11" height="11" style="left:311.8px;top:436.5px" viewBox="0 0 11 11"><rect x="0.3" y="0.3" width="10" height="9.5" fill="#f0f0f8" stroke="#4040a0" stroke-width="0.4"/><circle cx="3" cy="3" r="2" fill="#e02020"/><circle cx="7.5" cy="3" r="2" fill="#2040e0"/><circle cx="3" cy="7.2" r="2" fill="#40c040"/><circle cx="7.5" cy="7.2" r="2" fill="#f08020"/></svg>
<svg width="11" height="11" style="left:331.8px;top:436.5px" viewBox="0 0 11 11"><rect width="10" height="10" fill="#0a0a0a"/><path d="M0.8,1.5 L6.5,9.8 L8.8,9.8 L2.8,0.8Z" fill="#3aa0f0"/><path d="M4.5,0.8 Q9.8,1.5 9.8,7 L8,6 Q7.5,3 4.5,2Z" fill="#f0a040"/></svg>
<svg width="11" height="11" style="left:352.5px;top:436.5px" viewBox="0 0 11 11"><circle cx="5" cy="5" r="4.8" fill="#db4437"/><path d="M5,5 L9.8,5 A4.8,4.8 0 0 1 2.6,9.2Z" fill="#f4c20d"/><path d="M5,5 L2.6,9.2 A4.8,4.8 0 0 1 0.8,2.6Z" fill="#0f9d58"/><circle cx="5" cy="5" r="2.2" fill="#fff"/><circle cx="5" cy="5" r="1.7" fill="#4285f4"/></svg>
<svg width="11" height="11" style="left:373px;top:436.5px" viewBox="0 0 11 11"><circle cx="5" cy="5" r="4.8" fill="#db4437"/><path d="M5,5 L9.8,5 A4.8,4.8 0 0 1 2.6,9.2Z" fill="#f4c20d"/><path d="M5,5 L2.6,9.2 A4.8,4.8 0 0 1 0.8,2.6Z" fill="#0f9d58"/><circle cx="5" cy="5" r="2.2" fill="#fff"/><circle cx="5" cy="5" r="1.7" fill="#4285f4"/></svg>
<div class="a" style="left:370px;top:448.8px;width:16px;height:1.2px;background:#76b9ed"></div>
<div class="a" style="left:388px;top:433px;width:20px;height:17px;background:#3b4b55"></div>
<svg width="12" height="12" style="left:392.5px;top:436.5px" viewBox="0 0 12 12"><rect x="0.3" y="0.3" width="10.5" height="10.5" fill="#0a0a0a" stroke="#aaa" stroke-width="0.6"/><path d="M1.2,1.8 L7,10.2 L9.3,10.2 L3.2,1.2Z" fill="#3aa0f0"/><path d="M4.8,1.2 Q10.2,2 10.2,7.5 L8.5,6.5 Q8,3.5 4.8,2.5Z" fill="#f0a040"/></svg>
<div class="a" style="left:388px;top:448.8px;width:20px;height:1.2px;background:#99ccf3"></div>
<svg width="6" height="4" style="left:698.5px;top:439.5px" viewBox="0 0 6 4"><path d="M0.5,3 L2.5,0.8 L4.5,3" stroke="#fff" stroke-width="0.6" fill="none"/></svg>
<svg width="6" height="10" style="left:709.5px;top:437.5px" viewBox="0 0 6 10"><rect x="0.8" y="0.5" width="3.5" height="2" fill="none" stroke="#ddd" stroke-width="0.5"/><rect x="0.5" y="3" width="4" height="5" fill="#ddd"/><rect x="1.5" y="4" width="2" height="2" fill="#666"/></svg>
<svg width="9" height="9" style="left:717.8px;top:438.3px" viewBox="0 0 9 9"><rect x="0.5" y="0.5" width="6.5" height="4.8" fill="none" stroke="#bbb" stroke-width="0.55"/><path d="M2.5,7 H5 M3.8,5.3 V7" stroke="#bbb" stroke-width="0.55"/></svg>
<svg width="9" height="9" style="left:727.5px;top:438px" viewBox="0 0 9 9"><path d="M0.5,3 H2 L4,1 V8 L2,6 H0.5Z" fill="none" stroke="#ddd" stroke-width="0.6"/><path d="M5,3 Q6,4.5 5,6 M6.2,2 Q8,4.5 6.2,7" stroke="#ddd" stroke-width="0.5" fill="none"/></svg>
<div class="t" style="left:738.6px;top:435.6px;font-size:5.3px;color:#fff">ENG</div>
<div class="t" style="left:741px;top:442.6px;font-size:5.3px;color:#fff">IN</div>
<div class="t" style="left:755px;top:435.6px;font-size:5.1px;color:#fff">3:30 AM</div>
<div class="t" style="left:753.6px;top:442.6px;font-size:5.1px;color:#fff">4/10/2021</div>
<svg width="12" height="12" style="left:782.5px;top:437.5px" viewBox="0 0 12 12"><path d="M0.8,0.8 H8 V6.5 H3.5 L0.8,8.5Z" fill="#e8e8e8" stroke="#fff" stroke-width="0.5"/><path d="M2,2.5 H7 M2,4.2 H6" stroke="#888" stroke-width="0.5"/><circle cx="7.8" cy="7.8" r="3" fill="#1a1a1a" stroke="#999" stroke-width="0.5"/><path d="M7.8,6.3 V9.3" stroke="#ddd" stroke-width="0.5"/></svg>
<div class="a" style="left:784px;top:407px;width:16px;height:15px;background:linear-gradient(#d8d8ea,#d0d0e4);border-left:0.8px solid #f4f4fb"></div>
<svg width="20" height="16" style="left:779px;top:407px" viewBox="0 0 20 16"><path d="M4,1.5 Q7,0 7.5,1.5 Q7,3 5,3.5 Q7.5,4 6,6" stroke="#e83030" stroke-width="0.9" fill="none"/><path d="M3,4.5 L1.5,10 Q7,10 7.5,6.5 Q7.5,4.5 3,4.5Z" stroke="#5030b0" stroke-width="1" fill="none"/><path d="M11,3.5 Q7,3 8.5,6 Q11,7.5 9.5,9.5 Q8,10.5 6.5,10" stroke="#f0a020" stroke-width="1" fill="none"/><text x="4" y="14.3" font-size="4.2" font-family="Liberation Sans" font-style="italic" font-weight="bold" fill="#4a30a0" textLength="14" lengthAdjust="spacingAndGlyphs">CATIA</text></svg>
<div class="a" style="left:776px;top:426px;width:7px;height:5px;background:#333"></div>
<div class="a" style="left:777px;top:427px;width:2.5px;height:2px;background:#ddd"></div>
<svg width="8" height="8" style="left:789.5px;top:424.5px" viewBox="0 0 8 8"><circle cx="4" cy="4" r="3" fill="#f0f0f0" stroke="#aaa" stroke-width="0.8"/></svg>
<!-- TB END -->
</body></html>
